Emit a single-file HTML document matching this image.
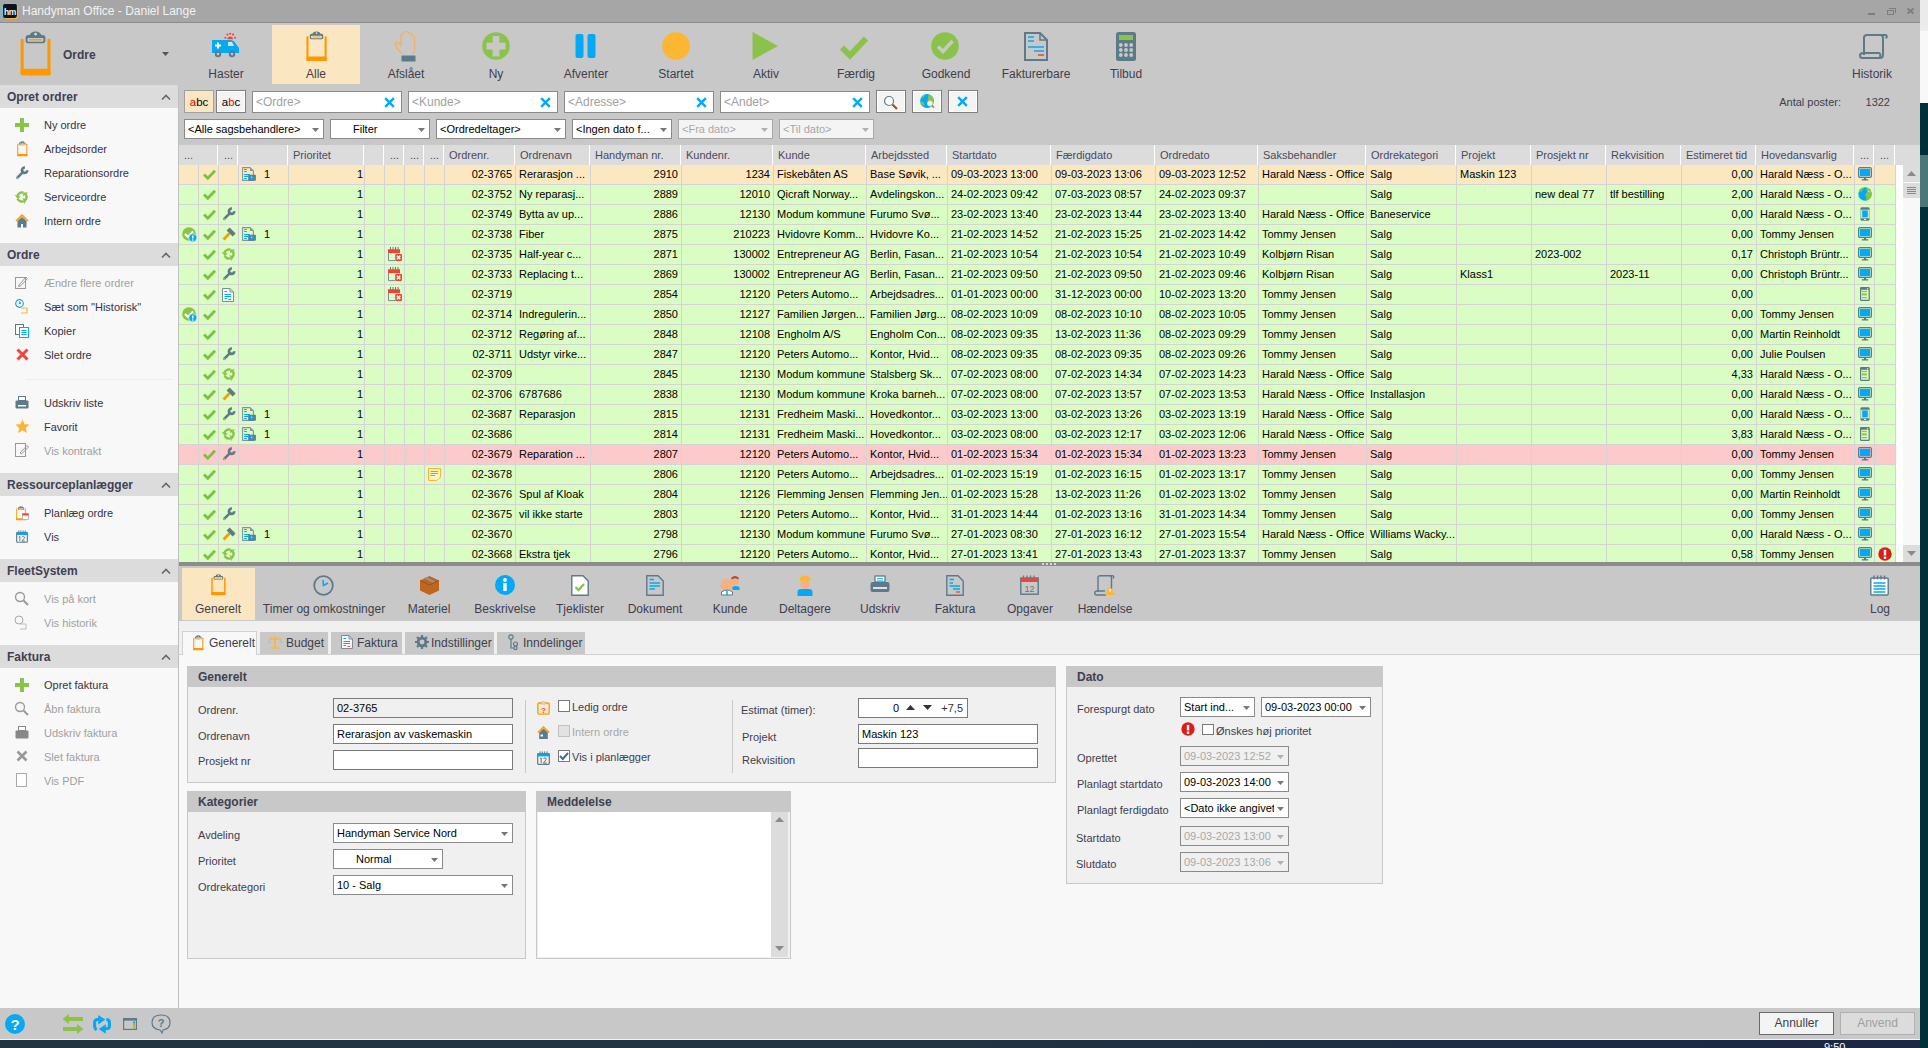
<!DOCTYPE html><html><head><meta charset="utf-8"><style>
*{margin:0;padding:0;box-sizing:border-box}
html,body{width:1928px;height:1048px;overflow:hidden;background:#003038;font-family:"Liberation Sans",sans-serif;font-size:11px;color:#000}
div,svg{position:absolute}
.t{white-space:nowrap;line-height:14px}
.ic{overflow:visible}
.hd{color:#4a4a5c}
.lbl{color:#3e3e4c}
</style></head><body>
<div style="left:1920px;top:0px;width:8px;height:31px;background:#ebebeb"></div>
<div style="left:1920px;top:31px;width:8px;height:72px;background:#f8f8f8"></div>
<div style="left:1920px;top:103px;width:8px;height:52px;background:#003038"></div>
<div style="left:1920px;top:155px;width:8px;height:52px;background:#4a7878"></div>
<div style="left:1920px;top:207px;width:8px;height:841px;background:#003038"></div>
<div style="left:0px;top:0px;width:1920px;height:22px;background:#a6a6a6"></div>
<div style="left:0px;top:22px;width:1920px;height:1px;background:#8c8c8c"></div>
<svg class="ic" style="left:2px;top:3px;width:16px;height:16px" viewBox="0 0 16 16"><rect x="0.5" y="0.5" width="15" height="15" rx="2.5" fill="#0d1020" stroke="#5fd0c0" stroke-width="1"/><path d="M15.5 3 V13 Q15.5 15.5 13 15.5 H3" fill="none" stroke="#f7b52c" stroke-width="1.2"/><text x="8" y="11.8" font-size="8.5" font-weight="bold" text-anchor="middle" fill="#f4f4f4" font-family="Liberation Sans" letter-spacing="-0.3">hm</text></svg>
<div class="t" style="left:22px;top:4px;font-size:12px;color:#f2f2f2;line-height:15px">Handyman Office - Daniel Lange</div>
<div style="left:1868px;top:13px;width:7px;height:2px;background:#7d7d7d"></div>
<div style="left:1887px;top:10px;width:7px;height:5px;border:1.5px solid #7d7d7d"></div>
<div style="left:1889px;top:8px;width:7px;height:5px;border-top:1.5px solid #7d7d7d;border-right:1.5px solid #7d7d7d"></div>
<svg class="ic" style="left:1907px;top:8px;width:7px;height:6px" viewBox="0 0 7 6"><path d="M0.5 0.5 L6.5 5.5 M6.5 0.5 L0.5 5.5" stroke="#7d7d7d" stroke-width="1.8"/></svg>
<div style="left:0px;top:23px;width:1920px;height:62px;background:#c8c8c8"></div>
<div style="left:272px;top:25px;width:88px;height:59px;background:#fae7c1"></div>
<svg class="ic" style="left:19.5px;top:31px;width:31px;height:45px" viewBox="0 0 31 45"><rect x="0.6" y="7.7" width="3.1" height="36.3" rx="1.2" fill="#ff9800"/><rect x="27.4" y="7.7" width="3.1" height="36.3" rx="1.2" fill="#ff9800"/><rect x="0.6" y="37.8" width="29.9" height="6.6" rx="1.8" fill="#ff9800"/><rect x="5.6" y="4" width="19.8" height="8.2" rx="2.8" fill="#5d7a89"/><ellipse cx="15.5" cy="4.4" rx="5.8" ry="3.8" fill="#5d7a89"/><rect x="7.5" y="7" width="15.9" height="3.8" rx="1.2" fill="#c8c8c8"/><rect x="9.5" y="8.1" width="12" height="1.3" fill="#ff9800"/><circle cx="15.6" cy="3.1" r="1.4" fill="#dcdcdc"/></svg>
<div class="t" style="left:63px;top:48px;font-size:12px;font-weight:bold;color:#404050">Ordre</div>
<svg class="ic" style="left:162px;top:52px;width:7px;height:4px" viewBox="0 0 7 4"><path d="M0 0H7L3.5 4Z" fill="#555"/></svg>
<div class="t" style="left:181px;top:67px;width:90px;text-align:center;font-size:12px;color:#3e3e4c;line-height:15px">Haster</div>
<div class="t" style="left:271px;top:67px;width:90px;text-align:center;font-size:12px;color:#3e3e4c;line-height:15px">Alle</div>
<div class="t" style="left:361px;top:67px;width:90px;text-align:center;font-size:12px;color:#3e3e4c;line-height:15px">Afslået</div>
<div class="t" style="left:451px;top:67px;width:90px;text-align:center;font-size:12px;color:#3e3e4c;line-height:15px">Ny</div>
<div class="t" style="left:541px;top:67px;width:90px;text-align:center;font-size:12px;color:#3e3e4c;line-height:15px">Afventer</div>
<div class="t" style="left:631px;top:67px;width:90px;text-align:center;font-size:12px;color:#3e3e4c;line-height:15px">Startet</div>
<div class="t" style="left:721px;top:67px;width:90px;text-align:center;font-size:12px;color:#3e3e4c;line-height:15px">Aktiv</div>
<div class="t" style="left:811px;top:67px;width:90px;text-align:center;font-size:12px;color:#3e3e4c;line-height:15px">Færdig</div>
<div class="t" style="left:901px;top:67px;width:90px;text-align:center;font-size:12px;color:#3e3e4c;line-height:15px">Godkend</div>
<div class="t" style="left:991px;top:67px;width:90px;text-align:center;font-size:12px;color:#3e3e4c;line-height:15px">Fakturerbare</div>
<div class="t" style="left:1081px;top:67px;width:90px;text-align:center;font-size:12px;color:#3e3e4c;line-height:15px">Tilbud</div>
<svg class="ic" style="left:211px;top:31px;width:30px;height:28px" viewBox="0 0 30 28"><g fill="#f44336"><path d="M16.4 8.2 A2.8 2.8 0 0 1 22 8.2Z"/><circle cx="14.37" cy="6.75" r="1.05"/><circle cx="16.39" cy="3.59" r="1.05"/><circle cx="19.20" cy="2.70" r="1.05"/><circle cx="22.01" cy="3.59" r="1.05"/><circle cx="24.03" cy="6.75" r="1.05"/></g><path d="M1 9 H19 Q23 9 25 13 L28 17 V22 H1 Z" fill="#03a9f4"/><path d="M17 11 H21 L23 15 H17Z" fill="#e0e0e0"/><path d="M7 11.5V17.5M4 14.5H10" stroke="#fff" stroke-width="2"/><circle cx="7" cy="23" r="3.2" fill="#5d7a89"/><circle cx="7" cy="23" r="1.3" fill="#c8c8c8"/><circle cx="21" cy="23" r="3.2" fill="#5d7a89"/><circle cx="21" cy="23" r="1.3" fill="#c8c8c8"/></svg>
<svg class="ic" style="left:305.5px;top:30.5px;width:21px;height:30.5px" viewBox="0 0 31 45"><rect x="0.6" y="7.7" width="3.1" height="36.3" rx="1.2" fill="#ff9800"/><rect x="27.4" y="7.7" width="3.1" height="36.3" rx="1.2" fill="#ff9800"/><rect x="0.6" y="37.8" width="29.9" height="6.6" rx="1.8" fill="#ff9800"/><rect x="5.6" y="4" width="19.8" height="8.2" rx="2.8" fill="#5d7a89"/><ellipse cx="15.5" cy="4.4" rx="5.8" ry="3.8" fill="#5d7a89"/><rect x="7.5" y="7" width="15.9" height="3.8" rx="1.2" fill="#fae7c1"/><rect x="9.5" y="8.1" width="12" height="1.3" fill="#ff9800"/><circle cx="15.6" cy="3.1" r="1.4" fill="#dcdcdc"/></svg>
<svg class="ic" style="left:394px;top:30px;width:24px;height:32px" viewBox="0 0 24 31"><path d="M8 23 Q2 18 1 13 Q2 11 4.5 12.5 L7 15 V5 Q7 3 9 3 Q10 0.5 12.5 1 Q14.5 1 15 3 Q17.5 2.5 18 5 Q20.5 5 20.5 8 V20 Q20 22 19 23" fill="none" stroke="#f3b36a" stroke-width="1.6"/><rect x="7.5" y="25" width="14" height="6" rx="0.5" fill="#5d7a89"/></svg>
<svg class="ic" style="left:482px;top:32px;width:28px;height:28px" viewBox="0 0 28 28"><circle cx="14" cy="14" r="13.8" fill="#8bc34a"/><rect x="4.5" y="10.7" width="19" height="6.8" fill="#c8c8c8"/><rect x="10.6" y="4" width="6.8" height="20.4" fill="#c8c8c8"/></svg>
<svg class="ic" style="left:575px;top:34px;width:22px;height:24px" viewBox="0 0 22 24"><rect x="0.5" y="0" width="8" height="24" rx="2" fill="#03a9f4"/><rect x="12.5" y="0" width="8" height="24" rx="2" fill="#03a9f4"/></svg>
<svg class="ic" style="left:662px;top:32px;width:28px;height:28px" viewBox="0 0 28 28"><circle cx="14" cy="14" r="13.8" fill="#fbb731"/></svg>
<svg class="ic" style="left:752px;top:32px;width:26px;height:28px" viewBox="0 0 26 28"><path d="M0.5 0 L26 14 L0.5 28Z" fill="#8bc34a"/></svg>
<svg class="ic" style="left:840px;top:35px;width:28px;height:24px" viewBox="0 0 28 24"><path d="M2 12.5 L10 20.5 L26 3.5" fill="none" stroke="#8bc34a" stroke-width="6"/></svg>
<svg class="ic" style="left:931px;top:32px;width:28px;height:28px" viewBox="0 0 28 28"><circle cx="14" cy="14" r="13.8" fill="#8bc34a"/><path d="M7 14.5 L12 19.5 L21.5 9" fill="none" stroke="#c8c8c8" stroke-width="3.6"/></svg>
<svg class="ic" style="left:1024px;top:32px;width:24px;height:29px" viewBox="0 0 24 29"><path d="M1 1 H16 L23 8 V28 H1Z" fill="none" stroke="#5d7a89" stroke-width="2"/><path d="M16 1 V8 H23" fill="none" stroke="#5d7a89" stroke-width="1.5"/><g stroke="#03a9f4" stroke-width="1.6"><path d="M4 5H10M4 9H10M4 15H20M10 19H20"/></g><path d="M14 23H20" stroke="#f44336" stroke-width="1.6"/></svg>
<svg class="ic" style="left:1116px;top:32px;width:20px;height:29px" viewBox="0 0 20 29"><rect x="0" y="0" width="20" height="29" rx="2.5" fill="#5d7a89"/><rect x="3" y="3" width="14" height="5" fill="#8bc34a"/><g fill="#c8c8c8"><circle cx="4.8" cy="13" r="1.9"/><circle cx="10" cy="13" r="1.9"/><circle cx="15.2" cy="13" r="1.9"/><circle cx="4.8" cy="18" r="1.9"/><circle cx="10" cy="18" r="1.9"/><circle cx="15.2" cy="18" r="1.9"/><circle cx="4.8" cy="23" r="1.9"/><circle cx="10" cy="23" r="1.9"/><circle cx="15.2" cy="23" r="1.9"/></g></svg>
<div class="t" style="left:1827px;top:67px;width:90px;text-align:center;font-size:12px;color:#3e3e4c;line-height:15px">Historik</div>
<svg class="ic" style="left:1859px;top:34px;width:29px;height:25px" viewBox="0 0 29 25"><path d="M5 21 V3.5 Q5 1 8 1 H27 Q28.5 2 27 4.5 M22 1 Q24 1.5 24 4 V21 Q24 24 21 24 H3.5 Q1 24 1 21.5 Q1 19 4 19 H20 Q22 19.5 21 23" fill="none" stroke="#5d7a89" stroke-width="2"/></svg>
<div style="left:0px;top:85px;width:178px;height:923px;background:#f8f8f8"></div>
<div style="left:178px;top:85px;width:1px;height:923px;background:#c0c0c0"></div>
<div style="left:0px;top:85px;width:178px;height:23px;background:#dcdcdc"></div>
<div class="t" style="left:7px;top:90px;font-size:12px;font-weight:bold;color:#404052;line-height:15px">Opret ordrer</div>
<svg class="ic" style="left:161px;top:94px;width:10px;height:6px" viewBox="0 0 10 6"><path d="M1 5.5 L5 1.5 L9 5.5" fill="none" stroke="#666" stroke-width="1.6"/></svg>
<div class="t" style="left:44px;top:118px;font-size:11px;color:#333344;line-height:14px">Ny ordre</div>
<svg class="ic" style="left:15px;top:118px;width:14px;height:14px" viewBox="0 0 14 14"><path d="M5 0H9V5H14V9H9V14H5V9H0V5H5Z" fill="#8bc34a"/></svg>
<div class="t" style="left:44px;top:142px;font-size:11px;color:#333344;line-height:14px">Arbejdsorder</div>
<svg class="ic" style="left:17px;top:141px;width:10.5px;height:15.5px" viewBox="0 0 31 45"><rect x="0.6" y="7.7" width="3.1" height="36.3" rx="1.2" fill="#ff9800"/><rect x="27.4" y="7.7" width="3.1" height="36.3" rx="1.2" fill="#ff9800"/><rect x="0.6" y="37.8" width="29.9" height="6.6" rx="1.8" fill="#ff9800"/><rect x="5.6" y="4" width="19.8" height="8.2" rx="2.8" fill="#5d7a89"/><ellipse cx="15.5" cy="4.4" rx="5.8" ry="3.8" fill="#5d7a89"/><rect x="7.5" y="7" width="15.9" height="3.8" rx="1.2" fill="#f8f8f8"/><rect x="9.5" y="8.1" width="12" height="1.3" fill="#ff9800"/><circle cx="15.6" cy="3.1" r="1.4" fill="#dcdcdc"/></svg>
<div class="t" style="left:44px;top:166px;font-size:11px;color:#333344;line-height:14px">Reparationsordre</div>
<svg class="ic" style="left:15px;top:166px;width:14px;height:14px" viewBox="0 0 14 14"><path d="M12.3 4.3 A2.7 2.7 0 1 1 9.9 1.6" fill="none" stroke="#5d7a89" stroke-width="2.6"/><path d="M8.2 5.8 L2.2 11.8" stroke="#5d7a89" stroke-width="2.6" stroke-linecap="round"/><circle cx="2.1" cy="11.9" r="0.7" fill="#e8f4e0"/></svg>
<div class="t" style="left:44px;top:190px;font-size:11px;color:#333344;line-height:14px">Serviceordre</div>
<svg class="ic" style="left:15px;top:190px;width:14px;height:14px" viewBox="0 0 14 14"><path d="M8.34 2.60 A4.6 4.6 0 0 0 2.54 5.89 M9.64 10.77 A4.6 4.6 0 0 0 10.62 4.17 M2.68 8.57 A4.6 4.6 0 0 0 8.80 11.23" fill="none" stroke="#8bc34a" stroke-width="2.4"/><path d="M2.87 9.02 L-0.50 4.85 L5.65 6.61Z M7.96 2.50 L13.31 2.42 L8.13 6.18Z M11.10 9.09 L9.80 14.28 L7.50 8.31Z" fill="#8bc34a"/></svg>
<div class="t" style="left:44px;top:214px;font-size:11px;color:#333344;line-height:14px">Intern ordre</div>
<svg class="ic" style="left:15px;top:214px;width:14px;height:14px" viewBox="0 0 14 14"><path d="M1 7 L7 1.2 L13 7" fill="none" stroke="#ff9800" stroke-width="1.6"/><path d="M2.5 7 L7 3 L11.5 7 V13.5 H8 V10 H6 V13.5 H2.5Z" fill="#5d7a89"/></svg>
<div style="left:0px;top:243px;width:178px;height:23px;background:#dcdcdc"></div>
<div class="t" style="left:7px;top:248px;font-size:12px;font-weight:bold;color:#404052;line-height:15px">Ordre</div>
<svg class="ic" style="left:161px;top:252px;width:10px;height:6px" viewBox="0 0 10 6"><path d="M1 5.5 L5 1.5 L9 5.5" fill="none" stroke="#666" stroke-width="1.6"/></svg>
<div class="t" style="left:44px;top:276px;font-size:11px;color:#a0a0a0;line-height:14px">Ændre flere ordrer</div>
<svg class="ic" style="left:15px;top:275px;width:13px;height:14px" viewBox="0 0 13 14"><rect x="0.5" y="2.5" width="10" height="11" fill="none" stroke="#999"/><path d="M4 10 L11 2 L12.5 3.5 L5.5 11 L3.5 11.5Z" fill="none" stroke="#999"/></svg>
<div class="t" style="left:44px;top:300px;font-size:11px;color:#333344;line-height:14px">Sæt som "Historisk"</div>
<svg class="ic" style="left:15px;top:299px;width:15px;height:15px" viewBox="0 0 15 15"><circle cx="4.5" cy="4.5" r="3.8" fill="#fff" stroke="#03a9f4" stroke-width="1.2"/><path d="M4.5 2.5V4.5H6" stroke="#03a9f4"/><path d="M6 9 H12 V14 H6" fill="none" stroke="#fbb731" stroke-width="1.2"/></svg>
<div class="t" style="left:44px;top:324px;font-size:11px;color:#333344;line-height:14px">Kopier</div>
<svg class="ic" style="left:15px;top:324px;width:14px;height:14px" viewBox="0 0 14 14"><rect x="0.5" y="0.5" width="8" height="10" fill="#fff" stroke="#5d7a89"/><rect x="4.5" y="3.5" width="9" height="10" fill="#fff" stroke="#03a9f4"/><path d="M6.5 6.5H11.5M6.5 8.5H11.5M6.5 10.5H11.5" stroke="#03a9f4"/></svg>
<div class="t" style="left:44px;top:348px;font-size:11px;color:#333344;line-height:14px">Slet ordre</div>
<svg class="ic" style="left:16px;top:348px;width:13px;height:13px" viewBox="0 0 13 13"><path d="M1.5 1.5 L11.5 11.5 M11.5 1.5 L1.5 11.5" stroke="#f44336" stroke-width="3"/></svg>
<div style="left:26px;top:379px;width:146px;height:1px;background:#ececec"></div>
<div class="t" style="left:44px;top:396px;font-size:11px;color:#333344;line-height:14px">Udskriv liste</div>
<svg class="ic" style="left:15px;top:396px;width:14px;height:13px" viewBox="0 0 14 13"><rect x="3.5" y="0.5" width="7" height="4" fill="#fff" stroke="#5d7a89"/><rect x="0.5" y="4.5" width="13" height="8" rx="1" fill="#5d7a89"/><rect x="3" y="9" width="8" height="1.5" fill="#fff"/></svg>
<div class="t" style="left:44px;top:420px;font-size:11px;color:#333344;line-height:14px">Favorit</div>
<svg class="ic" style="left:15px;top:419px;width:15px;height:15px" viewBox="0 0 15 15"><path d="M7.5 0.5 L9.6 5.3 L14.5 5.6 L10.8 9 L12 14 L7.5 11.3 L3 14 L4.2 9 L0.5 5.6 L5.4 5.3Z" fill="#fbb731"/></svg>
<div class="t" style="left:44px;top:444px;font-size:11px;color:#a0a0a0;line-height:14px">Vis kontrakt</div>
<svg class="ic" style="left:15px;top:443px;width:14px;height:14px" viewBox="0 0 14 14"><rect x="0.5" y="0.5" width="10" height="13" fill="none" stroke="#999"/><path d="M5 10 L12 2.5 L13.5 4 L6.5 11Z" fill="none" stroke="#999"/></svg>
<div style="left:0px;top:473px;width:178px;height:23px;background:#dcdcdc"></div>
<div class="t" style="left:7px;top:478px;font-size:12px;font-weight:bold;color:#404052;line-height:15px">Ressourceplanlægger</div>
<svg class="ic" style="left:161px;top:482px;width:10px;height:6px" viewBox="0 0 10 6"><path d="M1 5.5 L5 1.5 L9 5.5" fill="none" stroke="#666" stroke-width="1.6"/></svg>
<div class="t" style="left:44px;top:506px;font-size:11px;color:#333344;line-height:14px">Planlæg ordre</div>
<svg class="ic" style="left:16px;top:506px;width:10px;height:14.5px" viewBox="0 0 31 45"><rect x="0.6" y="7.7" width="3.1" height="36.3" rx="1.2" fill="#ff9800"/><rect x="27.4" y="7.7" width="3.1" height="36.3" rx="1.2" fill="#ff9800"/><rect x="0.6" y="37.8" width="29.9" height="6.6" rx="1.8" fill="#ff9800"/><rect x="5.6" y="4" width="19.8" height="8.2" rx="2.8" fill="#5d7a89"/><ellipse cx="15.5" cy="4.4" rx="5.8" ry="3.8" fill="#5d7a89"/><rect x="7.5" y="7" width="15.9" height="3.8" rx="1.2" fill="#f8f8f8"/><rect x="9.5" y="8.1" width="12" height="1.3" fill="#ff9800"/><circle cx="15.6" cy="3.1" r="1.4" fill="#dcdcdc"/></svg><svg class="ic" style="left:22px;top:513px;width:7px;height:7px" viewBox="0 0 7 7"><rect x="0.5" y="0.5" width="6" height="6" fill="#fff" stroke="#aab" stroke-width="0.8"/><rect x="0.5" y="0.5" width="6" height="2" fill="#f44336"/></svg>
<div class="t" style="left:44px;top:530px;font-size:11px;color:#333344;line-height:14px">Vis</div>
<svg class="ic" style="left:16px;top:530px;width:12px;height:13px" viewBox="0 0 13 14"><rect x="0.7" y="2.6" width="11.6" height="10.7" rx="0.8" fill="none" stroke="#5d7a89" stroke-width="1.2"/><rect x="0.7" y="2.4" width="11.6" height="3" fill="#03a9f4"/><g stroke="#5d7a89" stroke-width="1"><path d="M3 0.4V3.2M5.3 0.4V3.2M7.7 0.4V3.2M10 0.4V3.2"/></g><path d="M3 7.6 L4.2 7 V12 M6.4 7.8 Q6.8 7 8 7 Q9.6 7.2 9.2 8.6 L6.4 12 H9.8" fill="none" stroke="#5d7a89" stroke-width="1"/></svg>
<div style="left:0px;top:559px;width:178px;height:23px;background:#dcdcdc"></div>
<div class="t" style="left:7px;top:564px;font-size:12px;font-weight:bold;color:#404052;line-height:15px">FleetSystem</div>
<svg class="ic" style="left:161px;top:568px;width:10px;height:6px" viewBox="0 0 10 6"><path d="M1 5.5 L5 1.5 L9 5.5" fill="none" stroke="#666" stroke-width="1.6"/></svg>
<div class="t" style="left:44px;top:592px;font-size:11px;color:#a0a0a0;line-height:14px">Vis på kort</div>
<svg class="ic" style="left:14px;top:591px;width:16px;height:16px" viewBox="0 0 16 16"><circle cx="6" cy="6" r="4.5" fill="none" stroke="#999" stroke-width="1.3"/><path d="M9.5 9.5 L14 14" stroke="#999" stroke-width="2"/></svg>
<div class="t" style="left:44px;top:616px;font-size:11px;color:#a0a0a0;line-height:14px">Vis historik</div>
<svg class="ic" style="left:14px;top:615px;width:15px;height:15px" viewBox="0 0 15 15"><circle cx="5" cy="5" r="4" fill="none" stroke="#aaa"/><path d="M6 9 H12 V14 H6" fill="none" stroke="#bbb"/></svg>
<div style="left:0px;top:645px;width:178px;height:23px;background:#dcdcdc"></div>
<div class="t" style="left:7px;top:650px;font-size:12px;font-weight:bold;color:#404052;line-height:15px">Faktura</div>
<svg class="ic" style="left:161px;top:654px;width:10px;height:6px" viewBox="0 0 10 6"><path d="M1 5.5 L5 1.5 L9 5.5" fill="none" stroke="#666" stroke-width="1.6"/></svg>
<div class="t" style="left:44px;top:678px;font-size:11px;color:#333344;line-height:14px">Opret faktura</div>
<svg class="ic" style="left:15px;top:678px;width:14px;height:14px" viewBox="0 0 14 14"><path d="M5 0H9V5H14V9H9V14H5V9H0V5H5Z" fill="#8bc34a"/></svg>
<div class="t" style="left:44px;top:702px;font-size:11px;color:#a0a0a0;line-height:14px">Åbn faktura</div>
<svg class="ic" style="left:14px;top:701px;width:16px;height:16px" viewBox="0 0 16 16"><circle cx="6" cy="6" r="4.5" fill="none" stroke="#999" stroke-width="1.3"/><path d="M9.5 9.5 L14 14" stroke="#999" stroke-width="2"/></svg>
<div class="t" style="left:44px;top:726px;font-size:11px;color:#a0a0a0;line-height:14px">Udskriv faktura</div>
<svg class="ic" style="left:15px;top:726px;width:14px;height:13px" viewBox="0 0 14 13"><rect x="3.5" y="0.5" width="7" height="4" fill="#fff" stroke="#888"/><rect x="0.5" y="4.5" width="13" height="8" rx="1" fill="#888"/></svg>
<div class="t" style="left:44px;top:750px;font-size:11px;color:#a0a0a0;line-height:14px">Slet faktura</div>
<svg class="ic" style="left:16px;top:750px;width:12px;height:12px" viewBox="0 0 12 12"><path d="M1.5 1.5 L10.5 10.5 M10.5 1.5 L1.5 10.5" stroke="#999" stroke-width="2.6"/></svg>
<div class="t" style="left:44px;top:774px;font-size:11px;color:#a0a0a0;line-height:14px">Vis PDF</div>
<svg class="ic" style="left:16px;top:773px;width:11px;height:14px" viewBox="0 0 11 14"><rect x="0.5" y="0.5" width="10" height="13" fill="#fff" stroke="#aaa"/></svg>
<div style="left:179px;top:85px;width:1741px;height:60px;background:#c8c8c8"></div>
<div style="left:184px;top:90px;width:30px;height:23px;background:#fae7c1;border:1px solid #a0a0a0"></div>
<div class="t" style="left:184px;top:95px;width:30px;text-align:center;font-size:11.5px;line-height:14px"><span style="color:#e00">a</span>bc</div>
<div style="left:216px;top:90px;width:30px;height:23px;background:#f4f4f4;border:1px solid #808080;box-shadow:inset 0 0 0 1px #fff"></div>
<div class="t" style="left:216px;top:95px;width:30px;text-align:center;font-size:11.5px;line-height:14px">a<span style="color:#e00">b</span>c</div>
<div style="left:252px;top:91px;width:150px;height:22px;background:#fff;border:1px solid #8a8a8a"></div>
<div class="t" style="left:256px;top:95px;font-size:12px;color:#a0a0a0;line-height:14px">&lt;Ordre&gt;</div>
<svg class="ic" style="left:384px;top:97px;width:11px;height:11px" viewBox="0 0 11 11"><path d="M1.2 1.2 L9.8 9.8 M9.8 1.2 L1.2 9.8" stroke="#03a9f4" stroke-width="2.4"/></svg>
<div style="left:408px;top:91px;width:150px;height:22px;background:#fff;border:1px solid #8a8a8a"></div>
<div class="t" style="left:412px;top:95px;font-size:12px;color:#a0a0a0;line-height:14px">&lt;Kunde&gt;</div>
<svg class="ic" style="left:540px;top:97px;width:11px;height:11px" viewBox="0 0 11 11"><path d="M1.2 1.2 L9.8 9.8 M9.8 1.2 L1.2 9.8" stroke="#03a9f4" stroke-width="2.4"/></svg>
<div style="left:564px;top:91px;width:150px;height:22px;background:#fff;border:1px solid #8a8a8a"></div>
<div class="t" style="left:568px;top:95px;font-size:12px;color:#a0a0a0;line-height:14px">&lt;Adresse&gt;</div>
<svg class="ic" style="left:696px;top:97px;width:11px;height:11px" viewBox="0 0 11 11"><path d="M1.2 1.2 L9.8 9.8 M9.8 1.2 L1.2 9.8" stroke="#03a9f4" stroke-width="2.4"/></svg>
<div style="left:720px;top:91px;width:150px;height:22px;background:#fff;border:1px solid #8a8a8a"></div>
<div class="t" style="left:724px;top:95px;font-size:12px;color:#a0a0a0;line-height:14px">&lt;Andet&gt;</div>
<svg class="ic" style="left:852px;top:97px;width:11px;height:11px" viewBox="0 0 11 11"><path d="M1.2 1.2 L9.8 9.8 M9.8 1.2 L1.2 9.8" stroke="#03a9f4" stroke-width="2.4"/></svg>
<div style="left:876px;top:90px;width:30px;height:23px;background:#f4f4f4;border:1px solid #808080;box-shadow:inset 0 0 0 1px #fff"></div>
<div style="left:912px;top:90px;width:30px;height:23px;background:#f4f4f4;border:1px solid #808080;box-shadow:inset 0 0 0 1px #fff"></div>
<div style="left:948px;top:90px;width:30px;height:23px;background:#f4f4f4;border:1px solid #808080;box-shadow:inset 0 0 0 1px #fff"></div>
<svg class="ic" style="left:883px;top:95px;width:16px;height:16px" viewBox="0 0 16 16"><circle cx="6" cy="6" r="4.5" fill="#fff" stroke="#607d8b" stroke-width="1.2"/><path d="M9.5 9.5 L14 14" stroke="#a0522d" stroke-width="2.2"/></svg>
<svg class="ic" style="left:920px;top:94px;width:15px;height:15px" viewBox="0 0 15 15"><circle cx="7" cy="7" r="6.9" fill="#03a9f4"/><path d="M8.3 0.2 Q12.6 1.4 13.8 5.8 Q13.6 8 12.6 9.6 L9 8.4 L7.4 6.4 L8.2 4 Z" fill="#8bc34a"/><path d="M1.2 4 Q3 0.8 6.4 0.3 L4.2 2.6 L2.4 4.6Z" fill="#8bc34a"/><path d="M0.6 8 L3 7.6 L4.4 10.6 L3.8 12.4 Q1.4 10.6 0.6 8Z" fill="#8bc34a"/><circle cx="10" cy="9.4" r="2.6" fill="#f4f4f4" stroke="#cfd8dc" stroke-width="0.8"/><path d="M11.8 11.4 L13.8 13.6" stroke="#b8860b" stroke-width="1.6"/></svg>
<svg class="ic" style="left:957px;top:96px;width:11px;height:11px" viewBox="0 0 11 11"><path d="M1.2 1.2 L9.8 9.8 M9.8 1.2 L1.2 9.8" stroke="#03a9f4" stroke-width="2.4"/></svg>
<div class="t" style="left:1740px;top:95px;width:101px;text-align:right;font-size:11px;color:#3e3e4c">Antal poster:</div>
<div class="t" style="left:1790px;top:95px;width:100px;text-align:right;font-size:11px;color:#3e3e4c">1322</div>
<div style="left:184px;top:119px;width:140px;height:20px;background:#fff;border:1px solid #8a8a8a"></div>
<div class="t" style="left:188px;top:122px;font-size:11px;color:#000;line-height:14px;overflow:hidden;width:121px">&lt;Alle sagsbehandlere&gt;</div>
<svg class="ic" style="left:312px;top:128px;width:7px;height:4px" viewBox="0 0 7 4"><path d="M0 0H7L3.5 4Z" fill="#777"/></svg>
<div style="left:330px;top:119px;width:100px;height:20px;background:#fff;border:1px solid #8a8a8a"></div>
<div class="t" style="left:353px;top:122px;font-size:11px;color:#000;line-height:14px;overflow:hidden;width:62px">Filter</div>
<svg class="ic" style="left:418px;top:128px;width:7px;height:4px" viewBox="0 0 7 4"><path d="M0 0H7L3.5 4Z" fill="#777"/></svg>
<div style="left:436px;top:119px;width:130px;height:20px;background:#fff;border:1px solid #8a8a8a"></div>
<div class="t" style="left:440px;top:122px;font-size:11px;color:#000;line-height:14px;overflow:hidden;width:111px">&lt;Ordredeltager&gt;</div>
<svg class="ic" style="left:554px;top:128px;width:7px;height:4px" viewBox="0 0 7 4"><path d="M0 0H7L3.5 4Z" fill="#777"/></svg>
<div style="left:572px;top:119px;width:100px;height:20px;background:#fff;border:1px solid #8a8a8a"></div>
<div class="t" style="left:576px;top:122px;font-size:11px;color:#000;line-height:14px;overflow:hidden;width:81px">&lt;Ingen dato f...</div>
<svg class="ic" style="left:660px;top:128px;width:7px;height:4px" viewBox="0 0 7 4"><path d="M0 0H7L3.5 4Z" fill="#777"/></svg>
<div style="left:678px;top:119px;width:95px;height:20px;background:#f4f4f4;border:1px solid #a8a8a8"></div>
<div class="t" style="left:682px;top:122px;font-size:11px;color:#a8a8a8;line-height:14px;overflow:hidden;width:76px">&lt;Fra dato&gt;</div>
<svg class="ic" style="left:761px;top:128px;width:7px;height:4px" viewBox="0 0 7 4"><path d="M0 0H7L3.5 4Z" fill="#b0b0b0"/></svg>
<div style="left:779px;top:119px;width:95px;height:20px;background:#f4f4f4;border:1px solid #a8a8a8"></div>
<div class="t" style="left:783px;top:122px;font-size:11px;color:#a8a8a8;line-height:14px;overflow:hidden;width:76px">&lt;Til dato&gt;</div>
<svg class="ic" style="left:862px;top:128px;width:7px;height:4px" viewBox="0 0 7 4"><path d="M0 0H7L3.5 4Z" fill="#b0b0b0"/></svg>
<div style="left:179px;top:145px;width:1741px;height:20px;background:#dcdcdc"></div>
<div style="left:217px;top:145px;width:1px;height:20px;background:#ffffff"></div>
<div style="left:237px;top:145px;width:1px;height:20px;background:#ffffff"></div>
<div style="left:287px;top:145px;width:1px;height:20px;background:#ffffff"></div>
<div style="left:363px;top:145px;width:1px;height:20px;background:#ffffff"></div>
<div style="left:383px;top:145px;width:1px;height:20px;background:#ffffff"></div>
<div style="left:403px;top:145px;width:1px;height:20px;background:#ffffff"></div>
<div style="left:423px;top:145px;width:1px;height:20px;background:#ffffff"></div>
<div style="left:443px;top:145px;width:1px;height:20px;background:#ffffff"></div>
<div style="left:514px;top:145px;width:1px;height:20px;background:#ffffff"></div>
<div style="left:589px;top:145px;width:1px;height:20px;background:#ffffff"></div>
<div style="left:680px;top:145px;width:1px;height:20px;background:#ffffff"></div>
<div style="left:772px;top:145px;width:1px;height:20px;background:#ffffff"></div>
<div style="left:865px;top:145px;width:1px;height:20px;background:#ffffff"></div>
<div style="left:946px;top:145px;width:1px;height:20px;background:#ffffff"></div>
<div style="left:1050px;top:145px;width:1px;height:20px;background:#ffffff"></div>
<div style="left:1154px;top:145px;width:1px;height:20px;background:#ffffff"></div>
<div style="left:1257px;top:145px;width:1px;height:20px;background:#ffffff"></div>
<div style="left:1365px;top:145px;width:1px;height:20px;background:#ffffff"></div>
<div style="left:1455px;top:145px;width:1px;height:20px;background:#ffffff"></div>
<div style="left:1530px;top:145px;width:1px;height:20px;background:#ffffff"></div>
<div style="left:1605px;top:145px;width:1px;height:20px;background:#ffffff"></div>
<div style="left:1680px;top:145px;width:1px;height:20px;background:#ffffff"></div>
<div style="left:1755px;top:145px;width:1px;height:20px;background:#ffffff"></div>
<div style="left:1853px;top:145px;width:1px;height:20px;background:#ffffff"></div>
<div style="left:1873px;top:145px;width:1px;height:20px;background:#ffffff"></div>
<div style="left:1894px;top:145px;width:1px;height:20px;background:#ffffff"></div>
<div class="t" style="left:184px;top:148px;font-size:11px;color:#4a4a5c">...</div>
<div class="t" style="left:224px;top:148px;font-size:11px;color:#4a4a5c">...</div>
<div class="t" style="left:293px;top:148px;font-size:11px;color:#4a4a5c">Prioritet</div>
<div class="t" style="left:390px;top:148px;font-size:11px;color:#4a4a5c">...</div>
<div class="t" style="left:410px;top:148px;font-size:11px;color:#4a4a5c">...</div>
<div class="t" style="left:430px;top:148px;font-size:11px;color:#4a4a5c">...</div>
<div class="t" style="left:449px;top:148px;font-size:11px;color:#4a4a5c">Ordrenr.</div>
<div class="t" style="left:520px;top:148px;font-size:11px;color:#4a4a5c">Ordrenavn</div>
<div class="t" style="left:595px;top:148px;font-size:11px;color:#4a4a5c">Handyman nr.</div>
<div class="t" style="left:686px;top:148px;font-size:11px;color:#4a4a5c">Kundenr.</div>
<div class="t" style="left:778px;top:148px;font-size:11px;color:#4a4a5c">Kunde</div>
<div class="t" style="left:871px;top:148px;font-size:11px;color:#4a4a5c">Arbejdssted</div>
<div class="t" style="left:952px;top:148px;font-size:11px;color:#4a4a5c">Startdato</div>
<div class="t" style="left:1056px;top:148px;font-size:11px;color:#4a4a5c">Færdigdato</div>
<div class="t" style="left:1160px;top:148px;font-size:11px;color:#4a4a5c">Ordredato</div>
<div class="t" style="left:1263px;top:148px;font-size:11px;color:#4a4a5c">Saksbehandler</div>
<div class="t" style="left:1371px;top:148px;font-size:11px;color:#4a4a5c">Ordrekategori</div>
<div class="t" style="left:1461px;top:148px;font-size:11px;color:#4a4a5c">Projekt</div>
<div class="t" style="left:1536px;top:148px;font-size:11px;color:#4a4a5c">Prosjekt nr</div>
<div class="t" style="left:1611px;top:148px;font-size:11px;color:#4a4a5c">Rekvisition</div>
<div class="t" style="left:1686px;top:148px;font-size:11px;color:#4a4a5c">Estimeret tid</div>
<div class="t" style="left:1761px;top:148px;font-size:11px;color:#4a4a5c">Hovedansvarlig</div>
<div class="t" style="left:1860px;top:148px;font-size:11px;color:#4a4a5c">...</div>
<div class="t" style="left:1880px;top:148px;font-size:11px;color:#4a4a5c">...</div>
<div style="left:1895px;top:165px;width:8px;height:397px;background:#ffffff"></div>
<div style="left:1903px;top:165px;width:17px;height:397px;background:#f8f8f8"></div>
<div style="left:1903px;top:165px;width:17px;height:17px;background:#dcdcdc"></div>
<svg class="ic" style="left:1907px;top:171px;width:9px;height:5px" viewBox="0 0 9 5"><path d="M0 5H9L4.5 0Z" fill="#8a8a8a"/></svg>
<div style="left:1903px;top:183px;width:17px;height:15px;background:#dcdcdc"></div>
<div style="left:1907px;top:187px;width:9px;height:1px;background:#888"></div>
<div style="left:1907px;top:189px;width:9px;height:1px;background:#888"></div>
<div style="left:1907px;top:191px;width:9px;height:1px;background:#888"></div>
<div style="left:1907px;top:193px;width:9px;height:1px;background:#888"></div>
<div style="left:1903px;top:545px;width:17px;height:17px;background:#dcdcdc"></div>
<svg class="ic" style="left:1907px;top:551px;width:9px;height:5px" viewBox="0 0 9 5"><path d="M0 0H9L4.5 5Z" fill="#8a8a8a"/></svg>
<div style="left:179px;top:165px;width:1716px;height:19px;background:#fbe8c0"></div>
<div style="left:179px;top:184px;width:1716px;height:1px;background:#d4d4d4"></div>
<div class="t" style="left:288px;top:167px;width:75px;text-align:right;">1</div>
<div class="t" style="left:444px;top:167px;width:68px;text-align:right;">02-3765</div>
<div class="t" style="left:519px;top:167px;">Rerarasjon ...</div>
<div class="t" style="left:590px;top:167px;width:88px;text-align:right;">2910</div>
<div class="t" style="left:681px;top:167px;width:89px;text-align:right;">1234</div>
<div class="t" style="left:777px;top:167px;">Fiskebåten AS</div>
<div class="t" style="left:870px;top:167px;">Base Søvik, ...</div>
<div class="t" style="left:951px;top:167px;">09-03-2023 13:00</div>
<div class="t" style="left:1055px;top:167px;">09-03-2023 13:06</div>
<div class="t" style="left:1159px;top:167px;">09-03-2023 12:52</div>
<div class="t" style="left:1262px;top:167px;">Harald Næss - Office</div>
<div class="t" style="left:1370px;top:167px;">Salg</div>
<div class="t" style="left:1460px;top:167px;">Maskin 123</div>
<div class="t" style="left:1681px;top:167px;width:72px;text-align:right;">0,00</div>
<div class="t" style="left:1760px;top:167px;">Harald Næss - O...</div>
<svg class="ic" style="left:203px;top:169px;width:13px;height:11px" viewBox="0 0 13 11"><path d="M1 5.5 L4.8 9.3 L12 1.8" fill="none" stroke="#7cc142" stroke-width="2.8" stroke-linejoin="miter"/></svg>
<svg class="ic" style="left:242px;top:167px;width:15px;height:14px" viewBox="0 0 15 14"><path d="M0.6 0.6 H8 L11.4 4 V13.4 H0.6 Z" fill="none" stroke="#8593a0" stroke-width="1.1"/><path d="M8 0.6 L11.4 4 H8Z" fill="#8593a0"/><g stroke="#03a9f4" stroke-width="1.1" stroke-linecap="round"><path d="M2.6 2.5H4.4M2.6 4.5H4.4M2.6 7.5H7.5M2.6 9.4H6M2.6 11.5H4.4"/></g><rect x="6.2" y="7.8" width="7.7" height="5.9" rx="0.8" fill="#707684"/><circle cx="10.1" cy="10.8" r="2.2" fill="#03a9f4"/><circle cx="9.6" cy="10.2" r="0.7" fill="#9ee0ff"/></svg>
<div class="t" style="left:264px;top:167px;">1</div>
<svg class="ic" style="left:1858px;top:167px;width:14px;height:14px" viewBox="0 0 14 14"><rect x="0.65" y="0.65" width="12.7" height="9.7" rx="1.3" fill="none" stroke="#5d7a89" stroke-width="1.3"/><rect x="1.9" y="1.8" width="10.2" height="7.4" fill="#03a9f4"/><path d="M6.2 10.5 H7.8 L8.4 12.2 H10.2 Q10.6 13.4 10 13.4 H4 Q3.4 13.4 3.8 12.2 H5.6Z" fill="#5d7a89"/></svg>
<div style="left:179px;top:185px;width:1716px;height:19px;background:#d9fdc2"></div>
<div style="left:179px;top:204px;width:1716px;height:1px;background:#d4d4d4"></div>
<div class="t" style="left:288px;top:187px;width:75px;text-align:right;">1</div>
<div class="t" style="left:444px;top:187px;width:68px;text-align:right;">02-3752</div>
<div class="t" style="left:519px;top:187px;">Ny reparasj...</div>
<div class="t" style="left:590px;top:187px;width:88px;text-align:right;">2889</div>
<div class="t" style="left:681px;top:187px;width:89px;text-align:right;">12010</div>
<div class="t" style="left:777px;top:187px;">Qicraft Norway...</div>
<div class="t" style="left:870px;top:187px;">Avdelingskon...</div>
<div class="t" style="left:951px;top:187px;">24-02-2023 09:42</div>
<div class="t" style="left:1055px;top:187px;">07-03-2023 08:57</div>
<div class="t" style="left:1159px;top:187px;">24-02-2023 09:37</div>
<div class="t" style="left:1370px;top:187px;">Salg</div>
<div class="t" style="left:1535px;top:187px;">new deal 77</div>
<div class="t" style="left:1610px;top:187px;">tlf bestilling</div>
<div class="t" style="left:1681px;top:187px;width:72px;text-align:right;">2,00</div>
<div class="t" style="left:1760px;top:187px;">Harald Næss - O...</div>
<svg class="ic" style="left:203px;top:189px;width:13px;height:11px" viewBox="0 0 13 11"><path d="M1 5.5 L4.8 9.3 L12 1.8" fill="none" stroke="#7cc142" stroke-width="2.8" stroke-linejoin="miter"/></svg>
<svg class="ic" style="left:1858px;top:187px;width:14px;height:14px" viewBox="0 0 14 14"><circle cx="7" cy="7" r="6.7" fill="#03a9f4"/><path d="M8.3 0.4 Q12.6 1.6 13.6 6 Q13.8 10.5 10.6 12.8 Q9.4 13.5 8.2 13.7 L8.6 10.8 L7.4 8.6 L7.8 6.2 L9.4 5.2 L8.6 3.6Z" fill="#8bc34a"/><path d="M1.6 3.4 Q3.6 0.8 6.6 0.4 L4.8 2.4 L3.4 4.8 L1.2 5Z" fill="#8bc34a"/><path d="M10 4 L11.6 4.8" stroke="#d9fcc4" stroke-width="0.8"/></svg>
<div style="left:179px;top:205px;width:1716px;height:19px;background:#d9fdc2"></div>
<div style="left:179px;top:224px;width:1716px;height:1px;background:#d4d4d4"></div>
<div class="t" style="left:288px;top:207px;width:75px;text-align:right;">1</div>
<div class="t" style="left:444px;top:207px;width:68px;text-align:right;">02-3749</div>
<div class="t" style="left:519px;top:207px;">Bytta av up...</div>
<div class="t" style="left:590px;top:207px;width:88px;text-align:right;">2886</div>
<div class="t" style="left:681px;top:207px;width:89px;text-align:right;">12130</div>
<div class="t" style="left:777px;top:207px;">Modum kommune</div>
<div class="t" style="left:870px;top:207px;">Furumo Svø...</div>
<div class="t" style="left:951px;top:207px;">23-02-2023 13:40</div>
<div class="t" style="left:1055px;top:207px;">23-02-2023 13:44</div>
<div class="t" style="left:1159px;top:207px;">23-02-2023 13:40</div>
<div class="t" style="left:1262px;top:207px;">Harald Næss - Office</div>
<div class="t" style="left:1370px;top:207px;">Baneservice</div>
<div class="t" style="left:1681px;top:207px;width:72px;text-align:right;">0,00</div>
<div class="t" style="left:1760px;top:207px;">Harald Næss - O...</div>
<svg class="ic" style="left:203px;top:209px;width:13px;height:11px" viewBox="0 0 13 11"><path d="M1 5.5 L4.8 9.3 L12 1.8" fill="none" stroke="#7cc142" stroke-width="2.8" stroke-linejoin="miter"/></svg>
<svg class="ic" style="left:222px;top:207px;width:14px;height:14px" viewBox="0 0 14 14"><path d="M12.3 4.3 A2.7 2.7 0 1 1 9.9 1.6" fill="none" stroke="#5d7a89" stroke-width="2.6"/><path d="M8.2 5.8 L2.2 11.8" stroke="#5d7a89" stroke-width="2.6" stroke-linecap="round"/><circle cx="2.1" cy="11.9" r="0.7" fill="#e8f4e0"/></svg>
<svg class="ic" style="left:1860px;top:207px;width:10px;height:14px" viewBox="0 0 10 14"><rect x="0.8" y="0.6" width="8.4" height="12.8" rx="1" fill="none" stroke="#a6b0b6" stroke-width="1"/><rect x="0.6" y="0.4" width="8.8" height="2.3" rx="0.8" fill="#5d7a89"/><rect x="0.6" y="11.2" width="8.8" height="2.4" rx="0.8" fill="#5d7a89"/><rect x="4" y="11.8" width="2" height="1.2" fill="#e8f0e8"/><rect x="2.2" y="3.4" width="5.6" height="7" fill="#03a9f4"/></svg>
<div style="left:179px;top:225px;width:1716px;height:19px;background:#d9fdc2"></div>
<div style="left:179px;top:244px;width:1716px;height:1px;background:#d4d4d4"></div>
<div class="t" style="left:288px;top:227px;width:75px;text-align:right;">1</div>
<div class="t" style="left:444px;top:227px;width:68px;text-align:right;">02-3738</div>
<div class="t" style="left:519px;top:227px;">Fiber</div>
<div class="t" style="left:590px;top:227px;width:88px;text-align:right;">2875</div>
<div class="t" style="left:681px;top:227px;width:89px;text-align:right;">210223</div>
<div class="t" style="left:777px;top:227px;">Hvidovre Komm...</div>
<div class="t" style="left:870px;top:227px;">Hvidovre Ko...</div>
<div class="t" style="left:951px;top:227px;">21-02-2023 14:52</div>
<div class="t" style="left:1055px;top:227px;">21-02-2023 15:25</div>
<div class="t" style="left:1159px;top:227px;">21-02-2023 14:42</div>
<div class="t" style="left:1262px;top:227px;">Tommy Jensen</div>
<div class="t" style="left:1370px;top:227px;">Salg</div>
<div class="t" style="left:1681px;top:227px;width:72px;text-align:right;">0,00</div>
<div class="t" style="left:1760px;top:227px;">Tommy Jensen</div>
<svg class="ic" style="left:203px;top:229px;width:13px;height:11px" viewBox="0 0 13 11"><path d="M1 5.5 L4.8 9.3 L12 1.8" fill="none" stroke="#7cc142" stroke-width="2.8" stroke-linejoin="miter"/></svg>
<svg class="ic" style="left:182px;top:227px;width:15px;height:15px" viewBox="0 0 15 15"><circle cx="7" cy="7" r="6.8" fill="#8bc34a"/><path d="M3 7 L6 10 L11 4.5" fill="none" stroke="#fff" stroke-width="2"/><circle cx="10.8" cy="10.8" r="4" fill="#03a9f4" stroke="#d9fcc4" stroke-width="0.6"/><path d="M10.8 8.5V11.5" stroke="#fff" stroke-width="1.4"/><circle cx="10.8" cy="13" r="0.8" fill="#fff"/></svg>
<svg class="ic" style="left:222px;top:227px;width:14px;height:14px" viewBox="0 0 14 14"><path d="M1.6 12.4 L7.4 6.6" stroke="#ff9800" stroke-width="2.8"/><path d="M4.6 3.4 L7.6 0.4 L13.6 6.4 L10.6 9.4 Z" fill="#5d7a89"/></svg>
<svg class="ic" style="left:242px;top:227px;width:15px;height:14px" viewBox="0 0 15 14"><path d="M0.6 0.6 H8 L11.4 4 V13.4 H0.6 Z" fill="none" stroke="#8593a0" stroke-width="1.1"/><path d="M8 0.6 L11.4 4 H8Z" fill="#8593a0"/><g stroke="#03a9f4" stroke-width="1.1" stroke-linecap="round"><path d="M2.6 2.5H4.4M2.6 4.5H4.4M2.6 7.5H7.5M2.6 9.4H6M2.6 11.5H4.4"/></g><rect x="6.2" y="7.8" width="7.7" height="5.9" rx="0.8" fill="#707684"/><circle cx="10.1" cy="10.8" r="2.2" fill="#03a9f4"/><circle cx="9.6" cy="10.2" r="0.7" fill="#9ee0ff"/></svg>
<div class="t" style="left:264px;top:227px;">1</div>
<svg class="ic" style="left:1858px;top:227px;width:14px;height:14px" viewBox="0 0 14 14"><rect x="0.65" y="0.65" width="12.7" height="9.7" rx="1.3" fill="none" stroke="#5d7a89" stroke-width="1.3"/><rect x="1.9" y="1.8" width="10.2" height="7.4" fill="#03a9f4"/><path d="M6.2 10.5 H7.8 L8.4 12.2 H10.2 Q10.6 13.4 10 13.4 H4 Q3.4 13.4 3.8 12.2 H5.6Z" fill="#5d7a89"/></svg>
<div style="left:179px;top:245px;width:1716px;height:19px;background:#d9fdc2"></div>
<div style="left:179px;top:264px;width:1716px;height:1px;background:#d4d4d4"></div>
<div class="t" style="left:288px;top:247px;width:75px;text-align:right;">1</div>
<div class="t" style="left:444px;top:247px;width:68px;text-align:right;">02-3735</div>
<div class="t" style="left:519px;top:247px;">Half-year c...</div>
<div class="t" style="left:590px;top:247px;width:88px;text-align:right;">2871</div>
<div class="t" style="left:681px;top:247px;width:89px;text-align:right;">130002</div>
<div class="t" style="left:777px;top:247px;">Entrepreneur AG</div>
<div class="t" style="left:870px;top:247px;">Berlin, Fasan...</div>
<div class="t" style="left:951px;top:247px;">21-02-2023 10:54</div>
<div class="t" style="left:1055px;top:247px;">21-02-2023 10:54</div>
<div class="t" style="left:1159px;top:247px;">21-02-2023 10:49</div>
<div class="t" style="left:1262px;top:247px;">Kolbjørn Risan</div>
<div class="t" style="left:1370px;top:247px;">Salg</div>
<div class="t" style="left:1535px;top:247px;">2023-002</div>
<div class="t" style="left:1681px;top:247px;width:72px;text-align:right;">0,17</div>
<div class="t" style="left:1760px;top:247px;">Christoph Brüntr...</div>
<svg class="ic" style="left:203px;top:249px;width:13px;height:11px" viewBox="0 0 13 11"><path d="M1 5.5 L4.8 9.3 L12 1.8" fill="none" stroke="#7cc142" stroke-width="2.8" stroke-linejoin="miter"/></svg>
<svg class="ic" style="left:222px;top:247px;width:14px;height:14px" viewBox="0 0 14 14"><path d="M8.34 2.60 A4.6 4.6 0 0 0 2.54 5.89 M9.64 10.77 A4.6 4.6 0 0 0 10.62 4.17 M2.68 8.57 A4.6 4.6 0 0 0 8.80 11.23" fill="none" stroke="#8bc34a" stroke-width="2.4"/><path d="M2.87 9.02 L-0.50 4.85 L5.65 6.61Z M7.96 2.50 L13.31 2.42 L8.13 6.18Z M11.10 9.09 L9.80 14.28 L7.50 8.31Z" fill="#8bc34a"/></svg>
<svg class="ic" style="left:387px;top:245px;width:16px;height:17px" viewBox="0 0 16 17"><g stroke="#5d7a89" stroke-width="1"><path d="M3.5 2V5.5M6 2V5.5M8.5 2V5.5M11 2V5.5"/></g><rect x="1" y="4.3" width="12" height="3.8" fill="#f44336"/><path d="M1.5 8.2 V15.6 H8" fill="none" stroke="#7d8a96" stroke-width="1"/><rect x="8.2" y="9" width="6.8" height="7" rx="1" fill="#f44336"/><path d="M9.9 10.7 L13.3 14.3 M13.3 10.7 L9.9 14.3" stroke="#fff" stroke-width="1.5"/></svg>
<svg class="ic" style="left:1858px;top:247px;width:14px;height:14px" viewBox="0 0 14 14"><rect x="0.65" y="0.65" width="12.7" height="9.7" rx="1.3" fill="none" stroke="#5d7a89" stroke-width="1.3"/><rect x="1.9" y="1.8" width="10.2" height="7.4" fill="#03a9f4"/><path d="M6.2 10.5 H7.8 L8.4 12.2 H10.2 Q10.6 13.4 10 13.4 H4 Q3.4 13.4 3.8 12.2 H5.6Z" fill="#5d7a89"/></svg>
<div style="left:179px;top:265px;width:1716px;height:19px;background:#d9fdc2"></div>
<div style="left:179px;top:284px;width:1716px;height:1px;background:#d4d4d4"></div>
<div class="t" style="left:288px;top:267px;width:75px;text-align:right;">1</div>
<div class="t" style="left:444px;top:267px;width:68px;text-align:right;">02-3733</div>
<div class="t" style="left:519px;top:267px;">Replacing t...</div>
<div class="t" style="left:590px;top:267px;width:88px;text-align:right;">2869</div>
<div class="t" style="left:681px;top:267px;width:89px;text-align:right;">130002</div>
<div class="t" style="left:777px;top:267px;">Entrepreneur AG</div>
<div class="t" style="left:870px;top:267px;">Berlin, Fasan...</div>
<div class="t" style="left:951px;top:267px;">21-02-2023 09:50</div>
<div class="t" style="left:1055px;top:267px;">21-02-2023 09:50</div>
<div class="t" style="left:1159px;top:267px;">21-02-2023 09:46</div>
<div class="t" style="left:1262px;top:267px;">Kolbjørn Risan</div>
<div class="t" style="left:1370px;top:267px;">Salg</div>
<div class="t" style="left:1460px;top:267px;">Klass1</div>
<div class="t" style="left:1610px;top:267px;">2023-11</div>
<div class="t" style="left:1681px;top:267px;width:72px;text-align:right;">0,00</div>
<div class="t" style="left:1760px;top:267px;">Christoph Brüntr...</div>
<svg class="ic" style="left:203px;top:269px;width:13px;height:11px" viewBox="0 0 13 11"><path d="M1 5.5 L4.8 9.3 L12 1.8" fill="none" stroke="#7cc142" stroke-width="2.8" stroke-linejoin="miter"/></svg>
<svg class="ic" style="left:222px;top:267px;width:14px;height:14px" viewBox="0 0 14 14"><path d="M12.3 4.3 A2.7 2.7 0 1 1 9.9 1.6" fill="none" stroke="#5d7a89" stroke-width="2.6"/><path d="M8.2 5.8 L2.2 11.8" stroke="#5d7a89" stroke-width="2.6" stroke-linecap="round"/><circle cx="2.1" cy="11.9" r="0.7" fill="#e8f4e0"/></svg>
<svg class="ic" style="left:387px;top:265px;width:16px;height:17px" viewBox="0 0 16 17"><g stroke="#5d7a89" stroke-width="1"><path d="M3.5 2V5.5M6 2V5.5M8.5 2V5.5M11 2V5.5"/></g><rect x="1" y="4.3" width="12" height="3.8" fill="#f44336"/><path d="M1.5 8.2 V15.6 H8" fill="none" stroke="#7d8a96" stroke-width="1"/><rect x="8.2" y="9" width="6.8" height="7" rx="1" fill="#f44336"/><path d="M9.9 10.7 L13.3 14.3 M13.3 10.7 L9.9 14.3" stroke="#fff" stroke-width="1.5"/></svg>
<svg class="ic" style="left:1858px;top:267px;width:14px;height:14px" viewBox="0 0 14 14"><rect x="0.65" y="0.65" width="12.7" height="9.7" rx="1.3" fill="none" stroke="#5d7a89" stroke-width="1.3"/><rect x="1.9" y="1.8" width="10.2" height="7.4" fill="#03a9f4"/><path d="M6.2 10.5 H7.8 L8.4 12.2 H10.2 Q10.6 13.4 10 13.4 H4 Q3.4 13.4 3.8 12.2 H5.6Z" fill="#5d7a89"/></svg>
<div style="left:179px;top:285px;width:1716px;height:19px;background:#d9fdc2"></div>
<div style="left:179px;top:304px;width:1716px;height:1px;background:#d4d4d4"></div>
<div class="t" style="left:288px;top:287px;width:75px;text-align:right;">1</div>
<div class="t" style="left:444px;top:287px;width:68px;text-align:right;">02-3719</div>
<div class="t" style="left:590px;top:287px;width:88px;text-align:right;">2854</div>
<div class="t" style="left:681px;top:287px;width:89px;text-align:right;">12120</div>
<div class="t" style="left:777px;top:287px;">Peters Automo...</div>
<div class="t" style="left:870px;top:287px;">Arbejdsadres...</div>
<div class="t" style="left:951px;top:287px;">01-01-2023 00:00</div>
<div class="t" style="left:1055px;top:287px;">31-12-2023 00:00</div>
<div class="t" style="left:1159px;top:287px;">10-02-2023 13:20</div>
<div class="t" style="left:1262px;top:287px;">Tommy Jensen</div>
<div class="t" style="left:1370px;top:287px;">Salg</div>
<div class="t" style="left:1681px;top:287px;width:72px;text-align:right;">0,00</div>
<svg class="ic" style="left:203px;top:289px;width:13px;height:11px" viewBox="0 0 13 11"><path d="M1 5.5 L4.8 9.3 L12 1.8" fill="none" stroke="#7cc142" stroke-width="2.8" stroke-linejoin="miter"/></svg>
<svg class="ic" style="left:222px;top:288px;width:12px;height:14px" viewBox="0 0 12 14"><path d="M0.5 0.5 H8 L11.5 4 V13.5 H0.5 Z" fill="#f4f8fb" stroke="#7d8c96" stroke-width="1"/><path d="M8 0.5 V4 H11.5" fill="none" stroke="#7d8c96"/><g stroke="#03a9f4" stroke-width="1"><path d="M2.5 3.5 H5"/><path d="M2.5 6.5 H9"/><path d="M2.5 8.5 H9"/><path d="M2.5 10.5 H5"/></g><path d="M6.5 11.5 H9" stroke="#f44336"/></svg>
<svg class="ic" style="left:387px;top:285px;width:16px;height:17px" viewBox="0 0 16 17"><g stroke="#5d7a89" stroke-width="1"><path d="M3.5 2V5.5M6 2V5.5M8.5 2V5.5M11 2V5.5"/></g><rect x="1" y="4.3" width="12" height="3.8" fill="#f44336"/><path d="M1.5 8.2 V15.6 H8" fill="none" stroke="#7d8a96" stroke-width="1"/><rect x="8.2" y="9" width="6.8" height="7" rx="1" fill="#f44336"/><path d="M9.9 10.7 L13.3 14.3 M13.3 10.7 L9.9 14.3" stroke="#fff" stroke-width="1.5"/></svg>
<svg class="ic" style="left:1860px;top:287px;width:10px;height:14px" viewBox="0 0 10 14"><rect x="0.6" y="0.6" width="8.6" height="12.8" rx="0.6" fill="none" stroke="#5d7a89" stroke-width="1.2"/><rect x="0.6" y="0.6" width="8.6" height="2.2" fill="#5d7a89"/><circle cx="7.6" cy="1.7" r="0.7" fill="#d9fcc4"/><g stroke="#8bc34a"><path d="M1.9 4.5H6.8" stroke-width="1.2"/><path d="M1.9 7.4H6.8" stroke-width="2"/><path d="M1.9 10.6H6.8" stroke-width="1.2"/></g></svg>
<div style="left:179px;top:305px;width:1716px;height:19px;background:#d9fdc2"></div>
<div style="left:179px;top:324px;width:1716px;height:1px;background:#d4d4d4"></div>
<div class="t" style="left:288px;top:307px;width:75px;text-align:right;">1</div>
<div class="t" style="left:444px;top:307px;width:68px;text-align:right;">02-3714</div>
<div class="t" style="left:519px;top:307px;">Indregulerin...</div>
<div class="t" style="left:590px;top:307px;width:88px;text-align:right;">2850</div>
<div class="t" style="left:681px;top:307px;width:89px;text-align:right;">12127</div>
<div class="t" style="left:777px;top:307px;">Familien Jørgen...</div>
<div class="t" style="left:870px;top:307px;">Familien Jørg...</div>
<div class="t" style="left:951px;top:307px;">08-02-2023 10:09</div>
<div class="t" style="left:1055px;top:307px;">08-02-2023 10:10</div>
<div class="t" style="left:1159px;top:307px;">08-02-2023 10:05</div>
<div class="t" style="left:1262px;top:307px;">Tommy Jensen</div>
<div class="t" style="left:1370px;top:307px;">Salg</div>
<div class="t" style="left:1681px;top:307px;width:72px;text-align:right;">0,00</div>
<div class="t" style="left:1760px;top:307px;">Tommy Jensen</div>
<svg class="ic" style="left:203px;top:309px;width:13px;height:11px" viewBox="0 0 13 11"><path d="M1 5.5 L4.8 9.3 L12 1.8" fill="none" stroke="#7cc142" stroke-width="2.8" stroke-linejoin="miter"/></svg>
<svg class="ic" style="left:182px;top:307px;width:15px;height:15px" viewBox="0 0 15 15"><circle cx="7" cy="7" r="6.8" fill="#8bc34a"/><path d="M3 7 L6 10 L11 4.5" fill="none" stroke="#fff" stroke-width="2"/><circle cx="10.8" cy="10.8" r="4" fill="#03a9f4" stroke="#d9fcc4" stroke-width="0.6"/><path d="M10.8 8.5V11.5" stroke="#fff" stroke-width="1.4"/><circle cx="10.8" cy="13" r="0.8" fill="#fff"/></svg>
<svg class="ic" style="left:1858px;top:307px;width:14px;height:14px" viewBox="0 0 14 14"><rect x="0.65" y="0.65" width="12.7" height="9.7" rx="1.3" fill="none" stroke="#5d7a89" stroke-width="1.3"/><rect x="1.9" y="1.8" width="10.2" height="7.4" fill="#03a9f4"/><path d="M6.2 10.5 H7.8 L8.4 12.2 H10.2 Q10.6 13.4 10 13.4 H4 Q3.4 13.4 3.8 12.2 H5.6Z" fill="#5d7a89"/></svg>
<div style="left:179px;top:325px;width:1716px;height:19px;background:#d9fdc2"></div>
<div style="left:179px;top:344px;width:1716px;height:1px;background:#d4d4d4"></div>
<div class="t" style="left:288px;top:327px;width:75px;text-align:right;">1</div>
<div class="t" style="left:444px;top:327px;width:68px;text-align:right;">02-3712</div>
<div class="t" style="left:519px;top:327px;">Regøring af...</div>
<div class="t" style="left:590px;top:327px;width:88px;text-align:right;">2848</div>
<div class="t" style="left:681px;top:327px;width:89px;text-align:right;">12108</div>
<div class="t" style="left:777px;top:327px;">Engholm A/S</div>
<div class="t" style="left:870px;top:327px;">Engholm Con...</div>
<div class="t" style="left:951px;top:327px;">08-02-2023 09:35</div>
<div class="t" style="left:1055px;top:327px;">13-02-2023 11:36</div>
<div class="t" style="left:1159px;top:327px;">08-02-2023 09:29</div>
<div class="t" style="left:1262px;top:327px;">Tommy Jensen</div>
<div class="t" style="left:1370px;top:327px;">Salg</div>
<div class="t" style="left:1681px;top:327px;width:72px;text-align:right;">0,00</div>
<div class="t" style="left:1760px;top:327px;">Martin Reinholdt</div>
<svg class="ic" style="left:203px;top:329px;width:13px;height:11px" viewBox="0 0 13 11"><path d="M1 5.5 L4.8 9.3 L12 1.8" fill="none" stroke="#7cc142" stroke-width="2.8" stroke-linejoin="miter"/></svg>
<svg class="ic" style="left:1858px;top:327px;width:14px;height:14px" viewBox="0 0 14 14"><rect x="0.65" y="0.65" width="12.7" height="9.7" rx="1.3" fill="none" stroke="#5d7a89" stroke-width="1.3"/><rect x="1.9" y="1.8" width="10.2" height="7.4" fill="#03a9f4"/><path d="M6.2 10.5 H7.8 L8.4 12.2 H10.2 Q10.6 13.4 10 13.4 H4 Q3.4 13.4 3.8 12.2 H5.6Z" fill="#5d7a89"/></svg>
<div style="left:179px;top:345px;width:1716px;height:19px;background:#d9fdc2"></div>
<div style="left:179px;top:364px;width:1716px;height:1px;background:#d4d4d4"></div>
<div class="t" style="left:288px;top:347px;width:75px;text-align:right;">1</div>
<div class="t" style="left:444px;top:347px;width:68px;text-align:right;">02-3711</div>
<div class="t" style="left:519px;top:347px;">Udstyr virke...</div>
<div class="t" style="left:590px;top:347px;width:88px;text-align:right;">2847</div>
<div class="t" style="left:681px;top:347px;width:89px;text-align:right;">12120</div>
<div class="t" style="left:777px;top:347px;">Peters Automo...</div>
<div class="t" style="left:870px;top:347px;">Kontor, Hvid...</div>
<div class="t" style="left:951px;top:347px;">08-02-2023 09:35</div>
<div class="t" style="left:1055px;top:347px;">08-02-2023 09:35</div>
<div class="t" style="left:1159px;top:347px;">08-02-2023 09:26</div>
<div class="t" style="left:1262px;top:347px;">Tommy Jensen</div>
<div class="t" style="left:1370px;top:347px;">Salg</div>
<div class="t" style="left:1681px;top:347px;width:72px;text-align:right;">0,00</div>
<div class="t" style="left:1760px;top:347px;">Julie Poulsen</div>
<svg class="ic" style="left:203px;top:349px;width:13px;height:11px" viewBox="0 0 13 11"><path d="M1 5.5 L4.8 9.3 L12 1.8" fill="none" stroke="#7cc142" stroke-width="2.8" stroke-linejoin="miter"/></svg>
<svg class="ic" style="left:222px;top:347px;width:14px;height:14px" viewBox="0 0 14 14"><path d="M12.3 4.3 A2.7 2.7 0 1 1 9.9 1.6" fill="none" stroke="#5d7a89" stroke-width="2.6"/><path d="M8.2 5.8 L2.2 11.8" stroke="#5d7a89" stroke-width="2.6" stroke-linecap="round"/><circle cx="2.1" cy="11.9" r="0.7" fill="#e8f4e0"/></svg>
<svg class="ic" style="left:1858px;top:347px;width:14px;height:14px" viewBox="0 0 14 14"><rect x="0.65" y="0.65" width="12.7" height="9.7" rx="1.3" fill="none" stroke="#5d7a89" stroke-width="1.3"/><rect x="1.9" y="1.8" width="10.2" height="7.4" fill="#03a9f4"/><path d="M6.2 10.5 H7.8 L8.4 12.2 H10.2 Q10.6 13.4 10 13.4 H4 Q3.4 13.4 3.8 12.2 H5.6Z" fill="#5d7a89"/></svg>
<div style="left:179px;top:365px;width:1716px;height:19px;background:#d9fdc2"></div>
<div style="left:179px;top:384px;width:1716px;height:1px;background:#d4d4d4"></div>
<div class="t" style="left:288px;top:367px;width:75px;text-align:right;">1</div>
<div class="t" style="left:444px;top:367px;width:68px;text-align:right;">02-3709</div>
<div class="t" style="left:590px;top:367px;width:88px;text-align:right;">2845</div>
<div class="t" style="left:681px;top:367px;width:89px;text-align:right;">12130</div>
<div class="t" style="left:777px;top:367px;">Modum kommune</div>
<div class="t" style="left:870px;top:367px;">Stalsberg Sk...</div>
<div class="t" style="left:951px;top:367px;">07-02-2023 08:00</div>
<div class="t" style="left:1055px;top:367px;">07-02-2023 14:34</div>
<div class="t" style="left:1159px;top:367px;">07-02-2023 14:23</div>
<div class="t" style="left:1262px;top:367px;">Harald Næss - Office</div>
<div class="t" style="left:1370px;top:367px;">Salg</div>
<div class="t" style="left:1681px;top:367px;width:72px;text-align:right;">4,33</div>
<div class="t" style="left:1760px;top:367px;">Harald Næss - O...</div>
<svg class="ic" style="left:203px;top:369px;width:13px;height:11px" viewBox="0 0 13 11"><path d="M1 5.5 L4.8 9.3 L12 1.8" fill="none" stroke="#7cc142" stroke-width="2.8" stroke-linejoin="miter"/></svg>
<svg class="ic" style="left:222px;top:367px;width:14px;height:14px" viewBox="0 0 14 14"><path d="M8.34 2.60 A4.6 4.6 0 0 0 2.54 5.89 M9.64 10.77 A4.6 4.6 0 0 0 10.62 4.17 M2.68 8.57 A4.6 4.6 0 0 0 8.80 11.23" fill="none" stroke="#8bc34a" stroke-width="2.4"/><path d="M2.87 9.02 L-0.50 4.85 L5.65 6.61Z M7.96 2.50 L13.31 2.42 L8.13 6.18Z M11.10 9.09 L9.80 14.28 L7.50 8.31Z" fill="#8bc34a"/></svg>
<svg class="ic" style="left:1860px;top:367px;width:10px;height:14px" viewBox="0 0 10 14"><rect x="0.6" y="0.6" width="8.6" height="12.8" rx="0.6" fill="none" stroke="#5d7a89" stroke-width="1.2"/><rect x="0.6" y="0.6" width="8.6" height="2.2" fill="#5d7a89"/><circle cx="7.6" cy="1.7" r="0.7" fill="#d9fcc4"/><g stroke="#8bc34a"><path d="M1.9 4.5H6.8" stroke-width="1.2"/><path d="M1.9 7.4H6.8" stroke-width="2"/><path d="M1.9 10.6H6.8" stroke-width="1.2"/></g></svg>
<div style="left:179px;top:385px;width:1716px;height:19px;background:#d9fdc2"></div>
<div style="left:179px;top:404px;width:1716px;height:1px;background:#d4d4d4"></div>
<div class="t" style="left:288px;top:387px;width:75px;text-align:right;">1</div>
<div class="t" style="left:444px;top:387px;width:68px;text-align:right;">02-3706</div>
<div class="t" style="left:519px;top:387px;">6787686</div>
<div class="t" style="left:590px;top:387px;width:88px;text-align:right;">2838</div>
<div class="t" style="left:681px;top:387px;width:89px;text-align:right;">12130</div>
<div class="t" style="left:777px;top:387px;">Modum kommune</div>
<div class="t" style="left:870px;top:387px;">Kroka barneh...</div>
<div class="t" style="left:951px;top:387px;">07-02-2023 08:00</div>
<div class="t" style="left:1055px;top:387px;">07-02-2023 13:57</div>
<div class="t" style="left:1159px;top:387px;">07-02-2023 13:53</div>
<div class="t" style="left:1262px;top:387px;">Harald Næss - Office</div>
<div class="t" style="left:1370px;top:387px;">Installasjon</div>
<div class="t" style="left:1681px;top:387px;width:72px;text-align:right;">0,00</div>
<div class="t" style="left:1760px;top:387px;">Harald Næss - O...</div>
<svg class="ic" style="left:203px;top:389px;width:13px;height:11px" viewBox="0 0 13 11"><path d="M1 5.5 L4.8 9.3 L12 1.8" fill="none" stroke="#7cc142" stroke-width="2.8" stroke-linejoin="miter"/></svg>
<svg class="ic" style="left:222px;top:387px;width:14px;height:14px" viewBox="0 0 14 14"><path d="M1.6 12.4 L7.4 6.6" stroke="#ff9800" stroke-width="2.8"/><path d="M4.6 3.4 L7.6 0.4 L13.6 6.4 L10.6 9.4 Z" fill="#5d7a89"/></svg>
<svg class="ic" style="left:1858px;top:387px;width:14px;height:14px" viewBox="0 0 14 14"><rect x="0.65" y="0.65" width="12.7" height="9.7" rx="1.3" fill="none" stroke="#5d7a89" stroke-width="1.3"/><rect x="1.9" y="1.8" width="10.2" height="7.4" fill="#03a9f4"/><path d="M6.2 10.5 H7.8 L8.4 12.2 H10.2 Q10.6 13.4 10 13.4 H4 Q3.4 13.4 3.8 12.2 H5.6Z" fill="#5d7a89"/></svg>
<div style="left:179px;top:405px;width:1716px;height:19px;background:#d9fdc2"></div>
<div style="left:179px;top:424px;width:1716px;height:1px;background:#d4d4d4"></div>
<div class="t" style="left:288px;top:407px;width:75px;text-align:right;">1</div>
<div class="t" style="left:444px;top:407px;width:68px;text-align:right;">02-3687</div>
<div class="t" style="left:519px;top:407px;">Reparasjon</div>
<div class="t" style="left:590px;top:407px;width:88px;text-align:right;">2815</div>
<div class="t" style="left:681px;top:407px;width:89px;text-align:right;">12131</div>
<div class="t" style="left:777px;top:407px;">Fredheim Maski...</div>
<div class="t" style="left:870px;top:407px;">Hovedkontor...</div>
<div class="t" style="left:951px;top:407px;">03-02-2023 13:00</div>
<div class="t" style="left:1055px;top:407px;">03-02-2023 13:26</div>
<div class="t" style="left:1159px;top:407px;">03-02-2023 13:19</div>
<div class="t" style="left:1262px;top:407px;">Harald Næss - Office</div>
<div class="t" style="left:1370px;top:407px;">Salg</div>
<div class="t" style="left:1681px;top:407px;width:72px;text-align:right;">0,00</div>
<div class="t" style="left:1760px;top:407px;">Harald Næss - O...</div>
<svg class="ic" style="left:203px;top:409px;width:13px;height:11px" viewBox="0 0 13 11"><path d="M1 5.5 L4.8 9.3 L12 1.8" fill="none" stroke="#7cc142" stroke-width="2.8" stroke-linejoin="miter"/></svg>
<svg class="ic" style="left:222px;top:407px;width:14px;height:14px" viewBox="0 0 14 14"><path d="M12.3 4.3 A2.7 2.7 0 1 1 9.9 1.6" fill="none" stroke="#5d7a89" stroke-width="2.6"/><path d="M8.2 5.8 L2.2 11.8" stroke="#5d7a89" stroke-width="2.6" stroke-linecap="round"/><circle cx="2.1" cy="11.9" r="0.7" fill="#e8f4e0"/></svg>
<svg class="ic" style="left:242px;top:407px;width:15px;height:14px" viewBox="0 0 15 14"><path d="M0.6 0.6 H8 L11.4 4 V13.4 H0.6 Z" fill="none" stroke="#8593a0" stroke-width="1.1"/><path d="M8 0.6 L11.4 4 H8Z" fill="#8593a0"/><g stroke="#03a9f4" stroke-width="1.1" stroke-linecap="round"><path d="M2.6 2.5H4.4M2.6 4.5H4.4M2.6 7.5H7.5M2.6 9.4H6M2.6 11.5H4.4"/></g><rect x="6.2" y="7.8" width="7.7" height="5.9" rx="0.8" fill="#707684"/><circle cx="10.1" cy="10.8" r="2.2" fill="#03a9f4"/><circle cx="9.6" cy="10.2" r="0.7" fill="#9ee0ff"/></svg>
<div class="t" style="left:264px;top:407px;">1</div>
<svg class="ic" style="left:1860px;top:407px;width:10px;height:14px" viewBox="0 0 10 14"><rect x="0.8" y="0.6" width="8.4" height="12.8" rx="1" fill="none" stroke="#a6b0b6" stroke-width="1"/><rect x="0.6" y="0.4" width="8.8" height="2.3" rx="0.8" fill="#5d7a89"/><rect x="0.6" y="11.2" width="8.8" height="2.4" rx="0.8" fill="#5d7a89"/><rect x="4" y="11.8" width="2" height="1.2" fill="#e8f0e8"/><rect x="2.2" y="3.4" width="5.6" height="7" fill="#03a9f4"/></svg>
<div style="left:179px;top:425px;width:1716px;height:19px;background:#d9fdc2"></div>
<div style="left:179px;top:444px;width:1716px;height:1px;background:#d4d4d4"></div>
<div class="t" style="left:288px;top:427px;width:75px;text-align:right;">1</div>
<div class="t" style="left:444px;top:427px;width:68px;text-align:right;">02-3686</div>
<div class="t" style="left:590px;top:427px;width:88px;text-align:right;">2814</div>
<div class="t" style="left:681px;top:427px;width:89px;text-align:right;">12131</div>
<div class="t" style="left:777px;top:427px;">Fredheim Maski...</div>
<div class="t" style="left:870px;top:427px;">Hovedkontor...</div>
<div class="t" style="left:951px;top:427px;">03-02-2023 08:00</div>
<div class="t" style="left:1055px;top:427px;">03-02-2023 12:17</div>
<div class="t" style="left:1159px;top:427px;">03-02-2023 12:06</div>
<div class="t" style="left:1262px;top:427px;">Harald Næss - Office</div>
<div class="t" style="left:1370px;top:427px;">Salg</div>
<div class="t" style="left:1681px;top:427px;width:72px;text-align:right;">3,83</div>
<div class="t" style="left:1760px;top:427px;">Harald Næss - O...</div>
<svg class="ic" style="left:203px;top:429px;width:13px;height:11px" viewBox="0 0 13 11"><path d="M1 5.5 L4.8 9.3 L12 1.8" fill="none" stroke="#7cc142" stroke-width="2.8" stroke-linejoin="miter"/></svg>
<svg class="ic" style="left:222px;top:427px;width:14px;height:14px" viewBox="0 0 14 14"><path d="M8.34 2.60 A4.6 4.6 0 0 0 2.54 5.89 M9.64 10.77 A4.6 4.6 0 0 0 10.62 4.17 M2.68 8.57 A4.6 4.6 0 0 0 8.80 11.23" fill="none" stroke="#8bc34a" stroke-width="2.4"/><path d="M2.87 9.02 L-0.50 4.85 L5.65 6.61Z M7.96 2.50 L13.31 2.42 L8.13 6.18Z M11.10 9.09 L9.80 14.28 L7.50 8.31Z" fill="#8bc34a"/></svg>
<svg class="ic" style="left:242px;top:427px;width:15px;height:14px" viewBox="0 0 15 14"><path d="M0.6 0.6 H8 L11.4 4 V13.4 H0.6 Z" fill="none" stroke="#8593a0" stroke-width="1.1"/><path d="M8 0.6 L11.4 4 H8Z" fill="#8593a0"/><g stroke="#03a9f4" stroke-width="1.1" stroke-linecap="round"><path d="M2.6 2.5H4.4M2.6 4.5H4.4M2.6 7.5H7.5M2.6 9.4H6M2.6 11.5H4.4"/></g><rect x="6.2" y="7.8" width="7.7" height="5.9" rx="0.8" fill="#707684"/><circle cx="10.1" cy="10.8" r="2.2" fill="#03a9f4"/><circle cx="9.6" cy="10.2" r="0.7" fill="#9ee0ff"/></svg>
<div class="t" style="left:264px;top:427px;">1</div>
<svg class="ic" style="left:1860px;top:427px;width:10px;height:14px" viewBox="0 0 10 14"><rect x="0.6" y="0.6" width="8.6" height="12.8" rx="0.6" fill="none" stroke="#5d7a89" stroke-width="1.2"/><rect x="0.6" y="0.6" width="8.6" height="2.2" fill="#5d7a89"/><circle cx="7.6" cy="1.7" r="0.7" fill="#d9fcc4"/><g stroke="#8bc34a"><path d="M1.9 4.5H6.8" stroke-width="1.2"/><path d="M1.9 7.4H6.8" stroke-width="2"/><path d="M1.9 10.6H6.8" stroke-width="1.2"/></g></svg>
<div style="left:179px;top:445px;width:1716px;height:19px;background:#fccaca"></div>
<div style="left:179px;top:464px;width:1716px;height:1px;background:#d4d4d4"></div>
<div class="t" style="left:288px;top:447px;width:75px;text-align:right;">1</div>
<div class="t" style="left:444px;top:447px;width:68px;text-align:right;">02-3679</div>
<div class="t" style="left:519px;top:447px;">Reparation ...</div>
<div class="t" style="left:590px;top:447px;width:88px;text-align:right;">2807</div>
<div class="t" style="left:681px;top:447px;width:89px;text-align:right;">12120</div>
<div class="t" style="left:777px;top:447px;">Peters Automo...</div>
<div class="t" style="left:870px;top:447px;">Kontor, Hvid...</div>
<div class="t" style="left:951px;top:447px;">01-02-2023 15:34</div>
<div class="t" style="left:1055px;top:447px;">01-02-2023 15:34</div>
<div class="t" style="left:1159px;top:447px;">01-02-2023 13:23</div>
<div class="t" style="left:1262px;top:447px;">Tommy Jensen</div>
<div class="t" style="left:1370px;top:447px;">Salg</div>
<div class="t" style="left:1681px;top:447px;width:72px;text-align:right;">0,00</div>
<div class="t" style="left:1760px;top:447px;">Tommy Jensen</div>
<svg class="ic" style="left:203px;top:449px;width:13px;height:11px" viewBox="0 0 13 11"><path d="M1 5.5 L4.8 9.3 L12 1.8" fill="none" stroke="#7cc142" stroke-width="2.8" stroke-linejoin="miter"/></svg>
<svg class="ic" style="left:222px;top:447px;width:14px;height:14px" viewBox="0 0 14 14"><path d="M12.3 4.3 A2.7 2.7 0 1 1 9.9 1.6" fill="none" stroke="#5d7a89" stroke-width="2.6"/><path d="M8.2 5.8 L2.2 11.8" stroke="#5d7a89" stroke-width="2.6" stroke-linecap="round"/><circle cx="2.1" cy="11.9" r="0.7" fill="#e8f4e0"/></svg>
<svg class="ic" style="left:1858px;top:447px;width:14px;height:14px" viewBox="0 0 14 14"><rect x="0.65" y="0.65" width="12.7" height="9.7" rx="1.3" fill="none" stroke="#5d7a89" stroke-width="1.3"/><rect x="1.9" y="1.8" width="10.2" height="7.4" fill="#03a9f4"/><path d="M6.2 10.5 H7.8 L8.4 12.2 H10.2 Q10.6 13.4 10 13.4 H4 Q3.4 13.4 3.8 12.2 H5.6Z" fill="#5d7a89"/></svg>
<div style="left:179px;top:465px;width:1716px;height:19px;background:#d9fdc2"></div>
<div style="left:179px;top:484px;width:1716px;height:1px;background:#d4d4d4"></div>
<div class="t" style="left:288px;top:467px;width:75px;text-align:right;">1</div>
<div class="t" style="left:444px;top:467px;width:68px;text-align:right;">02-3678</div>
<div class="t" style="left:590px;top:467px;width:88px;text-align:right;">2806</div>
<div class="t" style="left:681px;top:467px;width:89px;text-align:right;">12120</div>
<div class="t" style="left:777px;top:467px;">Peters Automo...</div>
<div class="t" style="left:870px;top:467px;">Arbejdsadres...</div>
<div class="t" style="left:951px;top:467px;">01-02-2023 15:19</div>
<div class="t" style="left:1055px;top:467px;">01-02-2023 16:15</div>
<div class="t" style="left:1159px;top:467px;">01-02-2023 13:17</div>
<div class="t" style="left:1262px;top:467px;">Tommy Jensen</div>
<div class="t" style="left:1370px;top:467px;">Salg</div>
<div class="t" style="left:1681px;top:467px;width:72px;text-align:right;">0,00</div>
<div class="t" style="left:1760px;top:467px;">Tommy Jensen</div>
<svg class="ic" style="left:203px;top:469px;width:13px;height:11px" viewBox="0 0 13 11"><path d="M1 5.5 L4.8 9.3 L12 1.8" fill="none" stroke="#7cc142" stroke-width="2.8" stroke-linejoin="miter"/></svg>
<svg class="ic" style="left:428px;top:468px;width:13px;height:13px" viewBox="0 0 13 13"><path d="M0.5 0.5 H12.5 V9 L9 12.5 H0.5 Z" fill="#fff3c4" stroke="#fbb731"/><g stroke="#b0a070"><path d="M2.5 3.5H10M2.5 5.5H10M2.5 7.5H7"/></g></svg>
<svg class="ic" style="left:1858px;top:467px;width:14px;height:14px" viewBox="0 0 14 14"><rect x="0.65" y="0.65" width="12.7" height="9.7" rx="1.3" fill="none" stroke="#5d7a89" stroke-width="1.3"/><rect x="1.9" y="1.8" width="10.2" height="7.4" fill="#03a9f4"/><path d="M6.2 10.5 H7.8 L8.4 12.2 H10.2 Q10.6 13.4 10 13.4 H4 Q3.4 13.4 3.8 12.2 H5.6Z" fill="#5d7a89"/></svg>
<div style="left:179px;top:485px;width:1716px;height:19px;background:#d9fdc2"></div>
<div style="left:179px;top:504px;width:1716px;height:1px;background:#d4d4d4"></div>
<div class="t" style="left:288px;top:487px;width:75px;text-align:right;">1</div>
<div class="t" style="left:444px;top:487px;width:68px;text-align:right;">02-3676</div>
<div class="t" style="left:519px;top:487px;">Spul af Kloak</div>
<div class="t" style="left:590px;top:487px;width:88px;text-align:right;">2804</div>
<div class="t" style="left:681px;top:487px;width:89px;text-align:right;">12126</div>
<div class="t" style="left:777px;top:487px;">Flemming Jensen</div>
<div class="t" style="left:870px;top:487px;">Flemming Jen...</div>
<div class="t" style="left:951px;top:487px;">01-02-2023 15:28</div>
<div class="t" style="left:1055px;top:487px;">13-02-2023 11:26</div>
<div class="t" style="left:1159px;top:487px;">01-02-2023 13:02</div>
<div class="t" style="left:1262px;top:487px;">Tommy Jensen</div>
<div class="t" style="left:1370px;top:487px;">Salg</div>
<div class="t" style="left:1681px;top:487px;width:72px;text-align:right;">0,00</div>
<div class="t" style="left:1760px;top:487px;">Martin Reinholdt</div>
<svg class="ic" style="left:203px;top:489px;width:13px;height:11px" viewBox="0 0 13 11"><path d="M1 5.5 L4.8 9.3 L12 1.8" fill="none" stroke="#7cc142" stroke-width="2.8" stroke-linejoin="miter"/></svg>
<svg class="ic" style="left:1858px;top:487px;width:14px;height:14px" viewBox="0 0 14 14"><rect x="0.65" y="0.65" width="12.7" height="9.7" rx="1.3" fill="none" stroke="#5d7a89" stroke-width="1.3"/><rect x="1.9" y="1.8" width="10.2" height="7.4" fill="#03a9f4"/><path d="M6.2 10.5 H7.8 L8.4 12.2 H10.2 Q10.6 13.4 10 13.4 H4 Q3.4 13.4 3.8 12.2 H5.6Z" fill="#5d7a89"/></svg>
<div style="left:179px;top:505px;width:1716px;height:19px;background:#d9fdc2"></div>
<div style="left:179px;top:524px;width:1716px;height:1px;background:#d4d4d4"></div>
<div class="t" style="left:288px;top:507px;width:75px;text-align:right;">1</div>
<div class="t" style="left:444px;top:507px;width:68px;text-align:right;">02-3675</div>
<div class="t" style="left:519px;top:507px;">vil ikke starte</div>
<div class="t" style="left:590px;top:507px;width:88px;text-align:right;">2803</div>
<div class="t" style="left:681px;top:507px;width:89px;text-align:right;">12120</div>
<div class="t" style="left:777px;top:507px;">Peters Automo...</div>
<div class="t" style="left:870px;top:507px;">Kontor, Hvid...</div>
<div class="t" style="left:951px;top:507px;">31-01-2023 14:44</div>
<div class="t" style="left:1055px;top:507px;">01-02-2023 13:16</div>
<div class="t" style="left:1159px;top:507px;">31-01-2023 14:34</div>
<div class="t" style="left:1262px;top:507px;">Tommy Jensen</div>
<div class="t" style="left:1370px;top:507px;">Salg</div>
<div class="t" style="left:1681px;top:507px;width:72px;text-align:right;">0,00</div>
<div class="t" style="left:1760px;top:507px;">Tommy Jensen</div>
<svg class="ic" style="left:203px;top:509px;width:13px;height:11px" viewBox="0 0 13 11"><path d="M1 5.5 L4.8 9.3 L12 1.8" fill="none" stroke="#7cc142" stroke-width="2.8" stroke-linejoin="miter"/></svg>
<svg class="ic" style="left:222px;top:507px;width:14px;height:14px" viewBox="0 0 14 14"><path d="M12.3 4.3 A2.7 2.7 0 1 1 9.9 1.6" fill="none" stroke="#5d7a89" stroke-width="2.6"/><path d="M8.2 5.8 L2.2 11.8" stroke="#5d7a89" stroke-width="2.6" stroke-linecap="round"/><circle cx="2.1" cy="11.9" r="0.7" fill="#e8f4e0"/></svg>
<svg class="ic" style="left:1858px;top:507px;width:14px;height:14px" viewBox="0 0 14 14"><rect x="0.65" y="0.65" width="12.7" height="9.7" rx="1.3" fill="none" stroke="#5d7a89" stroke-width="1.3"/><rect x="1.9" y="1.8" width="10.2" height="7.4" fill="#03a9f4"/><path d="M6.2 10.5 H7.8 L8.4 12.2 H10.2 Q10.6 13.4 10 13.4 H4 Q3.4 13.4 3.8 12.2 H5.6Z" fill="#5d7a89"/></svg>
<div style="left:179px;top:525px;width:1716px;height:19px;background:#d9fdc2"></div>
<div style="left:179px;top:544px;width:1716px;height:1px;background:#d4d4d4"></div>
<div class="t" style="left:288px;top:527px;width:75px;text-align:right;">1</div>
<div class="t" style="left:444px;top:527px;width:68px;text-align:right;">02-3670</div>
<div class="t" style="left:590px;top:527px;width:88px;text-align:right;">2798</div>
<div class="t" style="left:681px;top:527px;width:89px;text-align:right;">12130</div>
<div class="t" style="left:777px;top:527px;">Modum kommune</div>
<div class="t" style="left:870px;top:527px;">Furumo Svø...</div>
<div class="t" style="left:951px;top:527px;">27-01-2023 08:30</div>
<div class="t" style="left:1055px;top:527px;">27-01-2023 16:12</div>
<div class="t" style="left:1159px;top:527px;">27-01-2023 15:54</div>
<div class="t" style="left:1262px;top:527px;">Harald Næss - Office</div>
<div class="t" style="left:1370px;top:527px;">Williams Wacky...</div>
<div class="t" style="left:1681px;top:527px;width:72px;text-align:right;">0,00</div>
<div class="t" style="left:1760px;top:527px;">Harald Næss - O...</div>
<svg class="ic" style="left:203px;top:529px;width:13px;height:11px" viewBox="0 0 13 11"><path d="M1 5.5 L4.8 9.3 L12 1.8" fill="none" stroke="#7cc142" stroke-width="2.8" stroke-linejoin="miter"/></svg>
<svg class="ic" style="left:222px;top:527px;width:14px;height:14px" viewBox="0 0 14 14"><path d="M1.6 12.4 L7.4 6.6" stroke="#ff9800" stroke-width="2.8"/><path d="M4.6 3.4 L7.6 0.4 L13.6 6.4 L10.6 9.4 Z" fill="#5d7a89"/></svg>
<svg class="ic" style="left:242px;top:527px;width:15px;height:14px" viewBox="0 0 15 14"><path d="M0.6 0.6 H8 L11.4 4 V13.4 H0.6 Z" fill="none" stroke="#8593a0" stroke-width="1.1"/><path d="M8 0.6 L11.4 4 H8Z" fill="#8593a0"/><g stroke="#03a9f4" stroke-width="1.1" stroke-linecap="round"><path d="M2.6 2.5H4.4M2.6 4.5H4.4M2.6 7.5H7.5M2.6 9.4H6M2.6 11.5H4.4"/></g><rect x="6.2" y="7.8" width="7.7" height="5.9" rx="0.8" fill="#707684"/><circle cx="10.1" cy="10.8" r="2.2" fill="#03a9f4"/><circle cx="9.6" cy="10.2" r="0.7" fill="#9ee0ff"/></svg>
<div class="t" style="left:264px;top:527px;">1</div>
<svg class="ic" style="left:1858px;top:527px;width:14px;height:14px" viewBox="0 0 14 14"><rect x="0.65" y="0.65" width="12.7" height="9.7" rx="1.3" fill="none" stroke="#5d7a89" stroke-width="1.3"/><rect x="1.9" y="1.8" width="10.2" height="7.4" fill="#03a9f4"/><path d="M6.2 10.5 H7.8 L8.4 12.2 H10.2 Q10.6 13.4 10 13.4 H4 Q3.4 13.4 3.8 12.2 H5.6Z" fill="#5d7a89"/></svg>
<div style="left:179px;top:545px;width:1716px;height:17px;background:#d9fdc2"></div>
<div class="t" style="left:288px;top:547px;width:75px;text-align:right;">1</div>
<div class="t" style="left:444px;top:547px;width:68px;text-align:right;">02-3668</div>
<div class="t" style="left:519px;top:547px;">Ekstra tjek</div>
<div class="t" style="left:590px;top:547px;width:88px;text-align:right;">2796</div>
<div class="t" style="left:681px;top:547px;width:89px;text-align:right;">12120</div>
<div class="t" style="left:777px;top:547px;">Peters Automo...</div>
<div class="t" style="left:870px;top:547px;">Kontor, Hvid...</div>
<div class="t" style="left:951px;top:547px;">27-01-2023 13:41</div>
<div class="t" style="left:1055px;top:547px;">27-01-2023 13:43</div>
<div class="t" style="left:1159px;top:547px;">27-01-2023 13:37</div>
<div class="t" style="left:1262px;top:547px;">Tommy Jensen</div>
<div class="t" style="left:1370px;top:547px;">Salg</div>
<div class="t" style="left:1681px;top:547px;width:72px;text-align:right;">0,58</div>
<div class="t" style="left:1760px;top:547px;">Tommy Jensen</div>
<svg class="ic" style="left:203px;top:549px;width:13px;height:11px" viewBox="0 0 13 11"><path d="M1 5.5 L4.8 9.3 L12 1.8" fill="none" stroke="#7cc142" stroke-width="2.8" stroke-linejoin="miter"/></svg>
<svg class="ic" style="left:222px;top:547px;width:14px;height:14px" viewBox="0 0 14 14"><path d="M8.34 2.60 A4.6 4.6 0 0 0 2.54 5.89 M9.64 10.77 A4.6 4.6 0 0 0 10.62 4.17 M2.68 8.57 A4.6 4.6 0 0 0 8.80 11.23" fill="none" stroke="#8bc34a" stroke-width="2.4"/><path d="M2.87 9.02 L-0.50 4.85 L5.65 6.61Z M7.96 2.50 L13.31 2.42 L8.13 6.18Z M11.10 9.09 L9.80 14.28 L7.50 8.31Z" fill="#8bc34a"/></svg>
<svg class="ic" style="left:1858px;top:547px;width:14px;height:14px" viewBox="0 0 14 14"><rect x="0.65" y="0.65" width="12.7" height="9.7" rx="1.3" fill="none" stroke="#5d7a89" stroke-width="1.3"/><rect x="1.9" y="1.8" width="10.2" height="7.4" fill="#03a9f4"/><path d="M6.2 10.5 H7.8 L8.4 12.2 H10.2 Q10.6 13.4 10 13.4 H4 Q3.4 13.4 3.8 12.2 H5.6Z" fill="#5d7a89"/></svg>
<svg class="ic" style="left:1878px;top:547px;width:14px;height:14px" viewBox="0 0 14 14"><circle cx="7.0" cy="7.0" r="6.7" fill="#e01b1b"/><rect x="5.8" y="2.8000000000000003" width="2.4" height="5.6000000000000005" fill="#fff"/><rect x="5.8" y="9.520000000000001" width="2.4" height="2.4" fill="#fff"/></svg>
<div style="left:198px;top:165px;width:1px;height:397px;background:#d4d4d4"></div>
<div style="left:218px;top:165px;width:1px;height:397px;background:#d4d4d4"></div>
<div style="left:238px;top:165px;width:1px;height:397px;background:#d4d4d4"></div>
<div style="left:288px;top:165px;width:1px;height:397px;background:#d4d4d4"></div>
<div style="left:364px;top:165px;width:1px;height:397px;background:#d4d4d4"></div>
<div style="left:384px;top:165px;width:1px;height:397px;background:#d4d4d4"></div>
<div style="left:404px;top:165px;width:1px;height:397px;background:#d4d4d4"></div>
<div style="left:424px;top:165px;width:1px;height:397px;background:#d4d4d4"></div>
<div style="left:444px;top:165px;width:1px;height:397px;background:#d4d4d4"></div>
<div style="left:515px;top:165px;width:1px;height:397px;background:#d4d4d4"></div>
<div style="left:590px;top:165px;width:1px;height:397px;background:#d4d4d4"></div>
<div style="left:681px;top:165px;width:1px;height:397px;background:#d4d4d4"></div>
<div style="left:773px;top:165px;width:1px;height:397px;background:#d4d4d4"></div>
<div style="left:866px;top:165px;width:1px;height:397px;background:#d4d4d4"></div>
<div style="left:947px;top:165px;width:1px;height:397px;background:#d4d4d4"></div>
<div style="left:1051px;top:165px;width:1px;height:397px;background:#d4d4d4"></div>
<div style="left:1155px;top:165px;width:1px;height:397px;background:#d4d4d4"></div>
<div style="left:1258px;top:165px;width:1px;height:397px;background:#d4d4d4"></div>
<div style="left:1366px;top:165px;width:1px;height:397px;background:#d4d4d4"></div>
<div style="left:1456px;top:165px;width:1px;height:397px;background:#d4d4d4"></div>
<div style="left:1531px;top:165px;width:1px;height:397px;background:#d4d4d4"></div>
<div style="left:1606px;top:165px;width:1px;height:397px;background:#d4d4d4"></div>
<div style="left:1681px;top:165px;width:1px;height:397px;background:#d4d4d4"></div>
<div style="left:1756px;top:165px;width:1px;height:397px;background:#d4d4d4"></div>
<div style="left:1854px;top:165px;width:1px;height:397px;background:#d4d4d4"></div>
<div style="left:1874px;top:165px;width:1px;height:397px;background:#d4d4d4"></div>
<div style="left:1895px;top:165px;width:1px;height:397px;background:#d4d4d4"></div>
<div style="left:178px;top:145px;width:1px;height:417px;background:#c0c0c0"></div>
<div style="left:179px;top:562px;width:1741px;height:4px;background:#8c8c8c"></div>
<div style="left:1042px;top:563px;width:2px;height:2px;background:#d8d8d8"></div>
<div style="left:1046px;top:563px;width:2px;height:2px;background:#d8d8d8"></div>
<div style="left:1050px;top:563px;width:2px;height:2px;background:#d8d8d8"></div>
<div style="left:1054px;top:563px;width:2px;height:2px;background:#d8d8d8"></div>
<div style="left:179px;top:566px;width:1741px;height:55px;background:#c8c8c8"></div>
<div style="left:182px;top:568px;width:73px;height:52px;background:#fae7c1"></div>
<div class="t" style="left:148px;top:602px;width:140px;text-align:center;font-size:12px;color:#3e3e4c;line-height:15px">Generelt</div>
<div class="t" style="left:254px;top:602px;width:140px;text-align:center;font-size:12px;color:#3e3e4c;line-height:15px">Timer og omkostninger</div>
<div class="t" style="left:359px;top:602px;width:140px;text-align:center;font-size:12px;color:#3e3e4c;line-height:15px">Materiel</div>
<div class="t" style="left:435px;top:602px;width:140px;text-align:center;font-size:12px;color:#3e3e4c;line-height:15px">Beskrivelse</div>
<div class="t" style="left:510px;top:602px;width:140px;text-align:center;font-size:12px;color:#3e3e4c;line-height:15px">Tjeklister</div>
<div class="t" style="left:585px;top:602px;width:140px;text-align:center;font-size:12px;color:#3e3e4c;line-height:15px">Dokument</div>
<div class="t" style="left:660px;top:602px;width:140px;text-align:center;font-size:12px;color:#3e3e4c;line-height:15px">Kunde</div>
<div class="t" style="left:735px;top:602px;width:140px;text-align:center;font-size:12px;color:#3e3e4c;line-height:15px">Deltagere</div>
<div class="t" style="left:810px;top:602px;width:140px;text-align:center;font-size:12px;color:#3e3e4c;line-height:15px">Udskriv</div>
<div class="t" style="left:885px;top:602px;width:140px;text-align:center;font-size:12px;color:#3e3e4c;line-height:15px">Faktura</div>
<div class="t" style="left:960px;top:602px;width:140px;text-align:center;font-size:12px;color:#3e3e4c;line-height:15px">Opgaver</div>
<div class="t" style="left:1035px;top:602px;width:140px;text-align:center;font-size:12px;color:#3e3e4c;line-height:15px">Hændelse</div>
<div class="t" style="left:1810px;top:602px;width:140px;text-align:center;font-size:12px;color:#3e3e4c;line-height:15px">Log</div>
<svg class="ic" style="left:210.5px;top:574px;width:14.8px;height:21.5px" viewBox="0 0 31 45"><rect x="0.6" y="7.7" width="3.1" height="36.3" rx="1.2" fill="#ff9800"/><rect x="27.4" y="7.7" width="3.1" height="36.3" rx="1.2" fill="#ff9800"/><rect x="0.6" y="37.8" width="29.9" height="6.6" rx="1.8" fill="#ff9800"/><rect x="5.6" y="4" width="19.8" height="8.2" rx="2.8" fill="#5d7a89"/><ellipse cx="15.5" cy="4.4" rx="5.8" ry="3.8" fill="#5d7a89"/><rect x="7.5" y="7" width="15.9" height="3.8" rx="1.2" fill="#fae7c1"/><rect x="9.5" y="8.1" width="12" height="1.3" fill="#ff9800"/><circle cx="15.6" cy="3.1" r="1.4" fill="#dcdcdc"/></svg>
<svg class="ic" style="left:313px;top:575px;width:21px;height:21px" viewBox="0 0 21 21"><circle cx="10.5" cy="10.5" r="9.3" fill="none" stroke="#5d7a89" stroke-width="1.8"/><path d="M10 5 L10.5 10.5 L15 8" fill="none" stroke="#03a9f4" stroke-width="1.6"/></svg>
<svg class="ic" style="left:419px;top:575px;width:21px;height:21px" viewBox="0 0 21 21"><path d="M10.5 1 L20 5.5 V15.5 L10.5 20 L1 15.5 V5.5Z" fill="#c0651e"/><path d="M5 3 L14.5 8 L16 6.5 L7 2Z" fill="#8a9aa2"/><path d="M1 5.5 L10.5 10 L20 5.5" fill="none" stroke="#a0501a"/></svg>
<svg class="ic" style="left:495px;top:575px;width:20px;height:20px" viewBox="0 0 20 20"><circle cx="10" cy="10" r="10" fill="#03a9f4"/><rect x="8.3" y="8" width="3.4" height="8" fill="#fff"/><circle cx="10" cy="5" r="1.9" fill="#fff"/></svg>
<svg class="ic" style="left:571px;top:575px;width:18px;height:21px" viewBox="0 0 18 21"><path d="M0.8 0.8 H12 L17.2 6 V20.2 H0.8Z" fill="#fff" stroke="#5d7a89" stroke-width="1.4"/><path d="M4.5 12 L7.5 15 L13 9" fill="none" stroke="#8bc34a" stroke-width="2.4"/></svg>
<svg class="ic" style="left:646px;top:575px;width:18px;height:21px" viewBox="0 0 18 21"><path d="M0.8 0.8 H12 L17.2 6 V20.2 H0.8Z" fill="none" stroke="#5d7a89" stroke-width="1.4"/><g stroke="#03a9f4" stroke-width="1.3"><path d="M3.5 4.5H8M3.5 8H14M3.5 11H14M3.5 14H9"/></g></svg>
<svg class="ic" style="left:720px;top:575px;width:21px;height:20px" viewBox="0 0 21 20"><circle cx="7" cy="10" r="6.5" fill="#f4b183"/><path d="M1.5 17 Q7 13 12.5 17 V20 H1.5Z" fill="#fff" stroke="#5d7a89" stroke-width="1"/><path d="M7 15.5V20" stroke="#03a9f4" stroke-width="1.5"/><circle cx="15" cy="6" r="4" fill="#f4b183"/><path d="M11 3 Q15 -1 19 3 L18 4.5 Q15 2 12 4.5Z" fill="#a0522d"/><path d="M12.5 12 Q15 10 19.5 12 V15 H12.5Z" fill="#03a9f4"/></svg>
<svg class="ic" style="left:796px;top:575px;width:18px;height:22px" viewBox="0 0 18 22"><path d="M3.5 6 Q3.5 0.5 9 0.5 Q14.5 0.5 14.5 6Z" fill="#fbb731"/><circle cx="9" cy="9.5" r="4.5" fill="#f4b183"/><path d="M1.5 21 V17 Q1.5 14 5 14 H13 Q16.5 14 16.5 17 V21Z" fill="#03a9f4"/></svg>
<svg class="ic" style="left:870px;top:575px;width:20px;height:19px" viewBox="0 0 20 19"><rect x="5" y="1" width="10" height="6" fill="#fff" stroke="#5d7a89" stroke-width="1.3"/><rect x="0.5" y="7" width="19" height="10" rx="2" fill="#5d7a89"/><rect x="3" y="12" width="14" height="2" fill="#e0e0e0"/><path d="M7 3.5H13M7 5.2H13" stroke="#03a9f4" stroke-width="0.8"/></svg>
<svg class="ic" style="left:946px;top:575px;width:18px;height:21px" viewBox="0 0 18 21"><path d="M0.8 0.8 H12 L17.2 6 V20.2 H0.8Z" fill="none" stroke="#5d7a89" stroke-width="1.4"/><g stroke="#03a9f4" stroke-width="1.3"><path d="M3.5 4.5H8M3.5 8H7M3.5 11H14M7 14H14"/></g><path d="M10 17H14" stroke="#f44336" stroke-width="1.3"/></svg>
<svg class="ic" style="left:1020px;top:575px;width:19px;height:20px" viewBox="0 0 19 20"><rect x="0.8" y="3" width="17.4" height="16.2" fill="none" stroke="#5d7a89" stroke-width="1.4"/><rect x="0.8" y="3" width="17.4" height="4" fill="#f44336"/><g stroke="#5d7a89" stroke-width="1.2"><path d="M3.5 0.5V4M7 0.5V4M10.5 0.5V4M14 0.5V4"/></g><text x="9.5" y="17" font-size="9" text-anchor="middle" fill="#5d7a89" font-family="Liberation Sans">12</text></svg>
<svg class="ic" style="left:1094px;top:575px;width:21px;height:21px" viewBox="0 0 21 21"><path d="M4 17 V2.5 Q4 0.8 6 0.8 H19 Q20.5 1.5 19 3.5 M16 0.8 Q17.5 1.2 17.5 3 V14 M3 20 H12 M3 20 Q0.8 20 0.8 18 Q0.8 16 3 16 H11" fill="none" stroke="#5d7a89" stroke-width="1.4"/><path d="M16 11 L21 20 H11Z" fill="#fbb731"/><rect x="15.5" y="14" width="1.2" height="3" fill="#fff"/></svg>
<svg class="ic" style="left:1870px;top:575px;width:19px;height:21px" viewBox="0 0 19 21"><rect x="0.8" y="3" width="17.4" height="17" rx="1" fill="#fff" stroke="#5d7a89" stroke-width="1.4"/><g stroke="#5d7a89" stroke-width="1.4"><path d="M4 0.5V4.5M7.5 0.5V4.5M11 0.5V4.5M14.5 0.5V4.5"/></g><g stroke="#03a9f4" stroke-width="1.3"><path d="M3.5 8H15.5M3.5 11H15.5M3.5 14H15.5M3.5 17H15.5"/></g></svg>
<div style="left:179px;top:621px;width:1741px;height:387px;background:#f0f0f0"></div>
<div style="left:179px;top:654px;width:1741px;height:354px;background:#f8f8f8;border-top:1px solid #d0d0d0"></div>
<div style="left:182px;top:631px;width:75px;height:24px;background:#f8f8f8;border:1px solid #d0d0d0;border-bottom:none"></div>
<div class="t" style="left:209px;top:636px;font-size:12px;color:#3e3e4c;line-height:14px">Generelt</div>
<div style="left:260px;top:632px;width:68px;height:22px;background:#c8c8c8"></div>
<div class="t" style="left:286px;top:636px;font-size:12px;color:#3e3e4c;line-height:14px">Budget</div>
<div style="left:331px;top:632px;width:71px;height:22px;background:#c8c8c8"></div>
<div class="t" style="left:357px;top:636px;font-size:12px;color:#3e3e4c;line-height:14px">Faktura</div>
<div style="left:405px;top:632px;width:89px;height:22px;background:#c8c8c8"></div>
<div class="t" style="left:431px;top:636px;font-size:12px;color:#3e3e4c;line-height:14px">Indstillinger</div>
<div style="left:497px;top:632px;width:88px;height:22px;background:#c8c8c8"></div>
<div class="t" style="left:523px;top:636px;font-size:12px;color:#3e3e4c;line-height:14px">Inndelinger</div>
<svg class="ic" style="left:193px;top:634.5px;width:10.5px;height:15.5px" viewBox="0 0 31 45"><rect x="0.6" y="7.7" width="3.1" height="36.3" rx="1.2" fill="#ff9800"/><rect x="27.4" y="7.7" width="3.1" height="36.3" rx="1.2" fill="#ff9800"/><rect x="0.6" y="37.8" width="29.9" height="6.6" rx="1.8" fill="#ff9800"/><rect x="5.6" y="4" width="19.8" height="8.2" rx="2.8" fill="#5d7a89"/><ellipse cx="15.5" cy="4.4" rx="5.8" ry="3.8" fill="#5d7a89"/><rect x="7.5" y="7" width="15.9" height="3.8" rx="1.2" fill="#f8f8f8"/><rect x="9.5" y="8.1" width="12" height="1.3" fill="#ff9800"/><circle cx="15.6" cy="3.1" r="1.4" fill="#dcdcdc"/></svg>
<svg class="ic" style="left:268px;top:635px;width:14px;height:14px" viewBox="0 0 14 14"><path d="M7 1V13 M3 13H11 M1 4H13" stroke="#fbb731" stroke-width="1.6"/><path d="M1 4 L0 8 H3Z M13 4 L11 8 H14Z" fill="#bbb"/></svg>
<svg class="ic" style="left:341px;top:635px;width:12px;height:14px" viewBox="0 0 12 14"><path d="M0.5 0.5 H8 L11.5 4 V13.5 H0.5 Z" fill="#f4f8fb" stroke="#7d8c96" stroke-width="1"/><path d="M8 0.5 V4 H11.5" fill="none" stroke="#7d8c96"/><g stroke="#03a9f4" stroke-width="1"><path d="M2.5 3.5 H5"/><path d="M2.5 6.5 H9"/><path d="M2.5 8.5 H9"/><path d="M2.5 10.5 H5"/></g><path d="M6.5 11.5 H9" stroke="#f44336"/></svg>
<svg class="ic" style="left:415px;top:635px;width:14px;height:14px" viewBox="0 0 14 14"><circle cx="7" cy="7" r="4" fill="none" stroke="#5d7a89" stroke-width="2.6"/><g stroke="#5d7a89" stroke-width="2.2"><path d="M7 0V14M0 7H14M2 2L12 12M12 2L2 12"/></g><circle cx="7" cy="7" r="2.4" fill="#c8c8c8"/></svg>
<svg class="ic" style="left:508px;top:634px;width:10px;height:16px" viewBox="0 0 10 16"><circle cx="3" cy="3" r="2.2" fill="none" stroke="#5d7a89" stroke-width="1.2"/><path d="M3 5V14 H6" fill="none" stroke="#5d7a89" stroke-width="1.2"/><circle cx="7.5" cy="10" r="2" fill="none" stroke="#5d7a89" stroke-width="1.2"/><circle cx="7.5" cy="14" r="1.6" fill="none" stroke="#5d7a89" stroke-width="1.2"/></svg>
<div style="left:187px;top:666px;width:869px;height:117px;background:#f0f0f0;border:1px solid #c8c8c8"></div>
<div style="left:187px;top:666px;width:869px;height:21px;background:#c8c8c8"></div>
<div class="t" style="left:198px;top:670px;font-size:12px;font-weight:bold;color:#404052;line-height:14px">Generelt</div>
<div class="t" style="left:198px;top:703px;font-size:11px;color:#3e3e4c">Ordrenr.</div>
<div class="t" style="left:198px;top:729px;font-size:11px;color:#3e3e4c">Ordrenavn</div>
<div class="t" style="left:198px;top:754px;font-size:11px;color:#3e3e4c">Prosjekt nr</div>
<div style="left:333px;top:698px;width:180px;height:20px;background:#f0f0f0;border:1px solid #7a7a7a"></div>
<div class="t" style="left:337px;top:701px;font-size:11px;color:#000;line-height:14px">02-3765</div>
<div style="left:333px;top:724px;width:180px;height:20px;background:#fff;border:1px solid #7a7a7a"></div>
<div class="t" style="left:337px;top:727px;font-size:11px;color:#000;line-height:14px">Rerarasjon av vaskemaskin</div>
<div style="left:333px;top:750px;width:180px;height:20px;background:#fff;border:1px solid #7a7a7a"></div>
<div style="left:525px;top:700px;width:1px;height:73px;background:#c8c8c8"></div>
<div style="left:732px;top:700px;width:1px;height:73px;background:#c8c8c8"></div>
<svg class="ic" style="left:537px;top:701px;width:13px;height:14px" viewBox="0 0 13 14"><rect x="0.8" y="2" width="11.4" height="11.2" rx="1.5" fill="#fde9cc" stroke="#ff9800" stroke-width="1.3"/><path d="M4 3 Q4 0.5 6.5 0.5 Q9 0.5 9 3Z" fill="#ddd" stroke="#aaa" stroke-width="0.6"/><text x="6.5" y="11.5" font-size="8" text-anchor="middle" fill="#f44336" font-family="Liberation Sans" font-weight="bold">?</text></svg>
<svg class="ic" style="left:537px;top:726px;width:13px;height:13px" viewBox="0 0 13 13"><path d="M0.8 6.5 L6.5 1 L12.2 6.5" fill="none" stroke="#ff9800" stroke-width="1.4"/><path d="M2.2 6.5 L6.5 2.6 L10.8 6.5 V13 H2.2Z" fill="#5d7a89"/><rect x="3.6" y="8.5" width="2.4" height="2" fill="#fff"/></svg>
<svg class="ic" style="left:537px;top:751px;width:13px;height:14px" viewBox="0 0 13 14"><rect x="0.7" y="2.6" width="11.6" height="10.7" rx="0.8" fill="none" stroke="#5d7a89" stroke-width="1.2"/><rect x="0.7" y="2.4" width="11.6" height="3" fill="#03a9f4"/><g stroke="#5d7a89" stroke-width="1"><path d="M3 0.4V3.2M5.3 0.4V3.2M7.7 0.4V3.2M10 0.4V3.2"/></g><path d="M3 7.6 L4.2 7 V12 M6.4 7.8 Q6.8 7 8 7 Q9.6 7.2 9.2 8.6 L6.4 12 H9.8" fill="none" stroke="#5d7a89" stroke-width="1"/></svg>
<div style="left:558px;top:700px;width:12px;height:12px;background:#fff;border:1px solid #7a7a7a"></div>
<div style="left:558px;top:725px;width:12px;height:12px;background:#e2e2e2;border:1px solid #c0c0c0"></div>
<div style="left:558px;top:750px;width:12px;height:12px;background:#fff;border:1px solid #7a7a7a"></div>
<svg class="ic" style="left:559px;top:752px;width:10px;height:8px" viewBox="0 0 10 8"><path d="M1 4 L3.8 7 L9 1" fill="none" stroke="#3a6ea5" stroke-width="2"/></svg>
<div class="t" style="left:572px;top:700px;font-size:11px;color:#3e3e4c">Ledig ordre</div>
<div class="t" style="left:572px;top:725px;font-size:11px;color:#a8a8a8">Intern ordre</div>
<div class="t" style="left:572px;top:750px;font-size:11px;color:#3e3e4c">Vis i planlægger</div>
<div class="t" style="left:741px;top:703px;font-size:11px;color:#3e3e4c">Estimat (timer):</div>
<div class="t" style="left:742px;top:730px;font-size:11px;color:#3e3e4c">Projekt</div>
<div class="t" style="left:742px;top:753px;font-size:11px;color:#3e3e4c">Rekvisition</div>
<div style="left:858px;top:698px;width:110px;height:20px;background:#fff;border:1px solid #7a7a7a"></div>
<div class="t" style="left:858px;top:701px;width:41px;text-align:right;font-size:11px">0</div>
<svg class="ic" style="left:906px;top:705px;width:9px;height:5px" viewBox="0 0 9 5"><path d="M0 5H9L4.5 0Z" fill="#333"/></svg>
<svg class="ic" style="left:923px;top:705px;width:9px;height:5px" viewBox="0 0 9 5"><path d="M0 0H9L4.5 5Z" fill="#333"/></svg>
<div class="t" style="left:900px;top:701px;width:63px;text-align:right;font-size:11px;color:#333">+7,5</div>
<div style="left:858px;top:724px;width:180px;height:20px;background:#fff;border:1px solid #7a7a7a"></div>
<div class="t" style="left:862px;top:727px;font-size:11px;color:#000;line-height:14px">Maskin 123</div>
<div style="left:858px;top:748px;width:180px;height:20px;background:#fff;border:1px solid #7a7a7a"></div>
<div style="left:1066px;top:666px;width:317px;height:218px;background:#f0f0f0;border:1px solid #c8c8c8"></div>
<div style="left:1066px;top:666px;width:317px;height:21px;background:#c8c8c8"></div>
<div class="t" style="left:1077px;top:670px;font-size:12px;font-weight:bold;color:#404052;line-height:14px">Dato</div>
<div class="t" style="left:1077px;top:702px;font-size:11px;color:#3e3e4c">Forespurgt dato</div>
<div style="left:1180px;top:697px;width:75px;height:20px;background:#fff;border:1px solid #8a8a8a"></div>
<div class="t" style="left:1184px;top:700px;font-size:11px;color:#000;line-height:14px;overflow:hidden;width:56px">Start ind...</div>
<svg class="ic" style="left:1243px;top:706px;width:7px;height:4px" viewBox="0 0 7 4"><path d="M0 0H7L3.5 4Z" fill="#777"/></svg>
<div style="left:1261px;top:697px;width:110px;height:20px;background:#fff;border:1px solid #8a8a8a"></div>
<div class="t" style="left:1265px;top:700px;font-size:11px;color:#000;line-height:14px;overflow:hidden;width:91px">09-03-2023 00:00</div>
<svg class="ic" style="left:1359px;top:706px;width:7px;height:4px" viewBox="0 0 7 4"><path d="M0 0H7L3.5 4Z" fill="#777"/></svg>
<svg class="ic" style="left:1181px;top:722px;width:14px;height:14px" viewBox="0 0 14 14"><circle cx="7.0" cy="7.0" r="6.7" fill="#e01b1b"/><rect x="5.8" y="2.8000000000000003" width="2.4" height="5.6000000000000005" fill="#fff"/><rect x="5.8" y="9.520000000000001" width="2.4" height="2.4" fill="#fff"/></svg>
<div style="left:1202px;top:724px;width:12px;height:11px;background:#fff;border:1px solid #7a7a7a"></div>
<div class="t" style="left:1216px;top:724px;font-size:11px;color:#3e3e4c">Ønskes høj prioritet</div>
<div class="t" style="left:1077px;top:751px;font-size:11px;color:#3e3e4c">Oprettet</div>
<div style="left:1180px;top:746px;width:109px;height:20px;background:#f0f0f0;border:1px solid #8a8a8a"></div>
<div class="t" style="left:1184px;top:749px;font-size:11px;color:#a8a8a8;line-height:14px;overflow:hidden;width:90px">09-03-2023 12:52</div>
<svg class="ic" style="left:1277px;top:755px;width:7px;height:4px" viewBox="0 0 7 4"><path d="M0 0H7L3.5 4Z" fill="#b0b0b0"/></svg>
<div class="t" style="left:1077px;top:777px;font-size:11px;color:#3e3e4c">Planlagt startdato</div>
<div style="left:1180px;top:772px;width:109px;height:20px;background:#fff;border:1px solid #8a8a8a"></div>
<div class="t" style="left:1184px;top:775px;font-size:11px;color:#000;line-height:14px;overflow:hidden;width:90px">09-03-2023 14:00</div>
<svg class="ic" style="left:1277px;top:781px;width:7px;height:4px" viewBox="0 0 7 4"><path d="M0 0H7L3.5 4Z" fill="#777"/></svg>
<div class="t" style="left:1077px;top:803px;font-size:11px;color:#3e3e4c">Planlagt ferdigdato</div>
<div style="left:1180px;top:798px;width:109px;height:20px;background:#fff;border:1px solid #8a8a8a"></div>
<div class="t" style="left:1184px;top:801px;font-size:11px;color:#000;line-height:14px;overflow:hidden;width:90px">&lt;Dato ikke angivet</div>
<svg class="ic" style="left:1277px;top:807px;width:7px;height:4px" viewBox="0 0 7 4"><path d="M0 0H7L3.5 4Z" fill="#777"/></svg>
<div class="t" style="left:1076px;top:831px;font-size:11px;color:#3e3e4c">Startdato</div>
<div style="left:1180px;top:826px;width:109px;height:20px;background:#f0f0f0;border:1px solid #8a8a8a"></div>
<div class="t" style="left:1184px;top:829px;font-size:11px;color:#a8a8a8;line-height:14px;overflow:hidden;width:90px">09-03-2023 13:00</div>
<svg class="ic" style="left:1277px;top:835px;width:7px;height:4px" viewBox="0 0 7 4"><path d="M0 0H7L3.5 4Z" fill="#b0b0b0"/></svg>
<div class="t" style="left:1076px;top:857px;font-size:11px;color:#3e3e4c">Slutdato</div>
<div style="left:1180px;top:852px;width:109px;height:20px;background:#f0f0f0;border:1px solid #8a8a8a"></div>
<div class="t" style="left:1184px;top:855px;font-size:11px;color:#a8a8a8;line-height:14px;overflow:hidden;width:90px">09-03-2023 13:06</div>
<svg class="ic" style="left:1277px;top:861px;width:7px;height:4px" viewBox="0 0 7 4"><path d="M0 0H7L3.5 4Z" fill="#b0b0b0"/></svg>
<div style="left:187px;top:791px;width:339px;height:168px;background:#f0f0f0;border:1px solid #c8c8c8"></div>
<div style="left:187px;top:791px;width:339px;height:21px;background:#c8c8c8"></div>
<div class="t" style="left:198px;top:795px;font-size:12px;font-weight:bold;color:#404052;line-height:14px">Kategorier</div>
<div class="t" style="left:198px;top:828px;font-size:11px;color:#3e3e4c">Avdeling</div>
<div class="t" style="left:198px;top:854px;font-size:11px;color:#3e3e4c">Prioritet</div>
<div class="t" style="left:198px;top:880px;font-size:11px;color:#3e3e4c">Ordrekategori</div>
<div style="left:333px;top:823px;width:180px;height:20px;background:#fff;border:1px solid #8a8a8a"></div>
<div class="t" style="left:337px;top:826px;font-size:11px;color:#000;line-height:14px;overflow:hidden;width:161px">Handyman Service Nord</div>
<svg class="ic" style="left:501px;top:832px;width:7px;height:4px" viewBox="0 0 7 4"><path d="M0 0H7L3.5 4Z" fill="#777"/></svg>
<div style="left:333px;top:849px;width:110px;height:20px;background:#fff;border:1px solid #8a8a8a"></div>
<div class="t" style="left:356px;top:852px;font-size:11px;color:#000;line-height:14px;overflow:hidden;width:72px">Normal</div>
<svg class="ic" style="left:431px;top:858px;width:7px;height:4px" viewBox="0 0 7 4"><path d="M0 0H7L3.5 4Z" fill="#777"/></svg>
<div style="left:333px;top:875px;width:180px;height:20px;background:#fff;border:1px solid #8a8a8a"></div>
<div class="t" style="left:337px;top:878px;font-size:11px;color:#000;line-height:14px;overflow:hidden;width:161px">10 - Salg</div>
<svg class="ic" style="left:501px;top:884px;width:7px;height:4px" viewBox="0 0 7 4"><path d="M0 0H7L3.5 4Z" fill="#777"/></svg>
<div style="left:536px;top:791px;width:255px;height:168px;background:#f0f0f0;border:1px solid #c8c8c8"></div>
<div style="left:536px;top:791px;width:255px;height:21px;background:#c8c8c8"></div>
<div class="t" style="left:547px;top:795px;font-size:12px;font-weight:bold;color:#404052;line-height:14px">Meddelelse</div>
<div style="left:538px;top:812px;width:233px;height:145px;background:#fff"></div>
<div style="left:771px;top:812px;width:17px;height:145px;background:#dcdcdc"></div>
<svg class="ic" style="left:775px;top:817px;width:9px;height:5px" viewBox="0 0 9 5"><path d="M0 5H9L4.5 0Z" fill="#8a8a8a"/></svg>
<svg class="ic" style="left:775px;top:946px;width:9px;height:5px" viewBox="0 0 9 5"><path d="M0 0H9L4.5 5Z" fill="#8a8a8a"/></svg>
<div style="left:0px;top:1008px;width:1920px;height:32px;background:#c8c8c8"></div>
<svg class="ic" style="left:5px;top:1014px;width:20px;height:20px" viewBox="0 0 20 20"><circle cx="10" cy="10" r="10" fill="#03a9f4"/><text x="10" y="15.5" font-size="15" font-weight="bold" text-anchor="middle" fill="#fff" font-family="Liberation Sans">?</text></svg>
<svg class="ic" style="left:62px;top:1013px;width:22px;height:22px" viewBox="0 0 22 22"><path d="M0.5 6 L7 1 V4 H21 V8 H7 V11Z" fill="#8bc34a"/><path d="M21.5 16 L15 11 V14 H1 V18 H15 V21Z" fill="#8bc34a"/></svg>
<svg class="ic" style="left:93px;top:1015px;width:18px;height:19px" viewBox="0 0 18 19"><g fill="none" stroke="#03a9f4" stroke-width="3.1"><path d="M8 4.5 H4.6 Q1.6 4.5 1.6 7.5 V11.6 Q1.6 13.6 3.6 14.8"/><path d="M13.4 4.5 Q16.4 4.6 16.4 7.6 V11 Q16.4 13.8 13.4 13.8 H10"/></g><path d="M5.2 0 L12.4 4.6 L5.2 9.4 Z" fill="#03a9f4"/><path d="M12.8 9.2 L5.8 14 L12.8 18.8 Z" fill="#03a9f4"/></svg>
<svg class="ic" style="left:123px;top:1018px;width:14px;height:12px" viewBox="0 0 14 12"><rect x="0.6" y="0.6" width="12.8" height="10.8" fill="none" stroke="#5d7a89" stroke-width="1.2"/><rect x="0.6" y="0.6" width="12.8" height="2" fill="#5d7a89"/><rect x="10" y="3.5" width="2" height="2" fill="#03a9f4"/><rect x="10" y="6" width="2" height="2" fill="#ff9800"/><rect x="10" y="8.5" width="2" height="2" fill="#8bc34a"/></svg>
<svg class="ic" style="left:151px;top:1014px;width:20px;height:20px" viewBox="0 0 20 20"><path d="M10 1 Q19 1 19 8.5 Q19 15 12 16 L11 19 L9 16 Q1 15 1 8.5 Q1 1 10 1Z" fill="none" stroke="#5d7a89" stroke-width="1.2"/><text x="10" y="12.5" font-size="11" font-weight="bold" text-anchor="middle" fill="#5d7a89" font-family="Liberation Sans">?</text></svg>
<div style="left:1759px;top:1012px;width:75px;height:23px;background:#f4f4f4;border:1px solid #6a6a6a"></div>
<div class="t" style="left:1759px;top:1016px;width:75px;text-align:center;font-size:12px;color:#3e3e4c">Annuller</div>
<div style="left:1840px;top:1012px;width:75px;height:23px;background:#dcdcdc;border:1px solid #b0b0b0"></div>
<div class="t" style="left:1840px;top:1016px;width:75px;text-align:center;font-size:12px;color:#a0a0a0">Anvend</div>
<div style="left:0px;top:1040px;width:1920px;height:8px;background:linear-gradient(90deg,#213541 0%,#203442 50%,#1d2a44 85%,#1c2844 100%)"></div>
<div style="left:0px;top:1039px;width:1920px;height:1px;background:#f4f4f4"></div>
<div class="t" style="left:1824px;top:1041px;font-size:11px;color:#fff;line-height:12px">9:50</div>
</body></html>
